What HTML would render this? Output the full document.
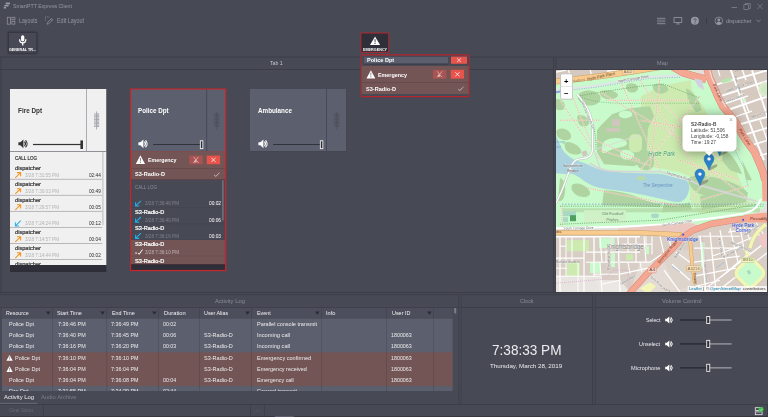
<!DOCTYPE html>
<html lang="en"><head><meta charset="utf-8"><title>SmartPTT Express Client</title>
<style>
html,body{margin:0;padding:0}
body{width:768px;height:417px;overflow:hidden;position:relative;background:#474955;font-family:"Liberation Sans",sans-serif}
.t{position:absolute;white-space:nowrap;transform-origin:0 0;display:block}
.r{position:absolute;display:block}
</style></head>
<body>
<header>
<svg class="r" style="left:3px;top:2px;" width="8" height="7"><g transform="translate(0.60 0.60) scale(0.5000 0.5000) translate(-0.00 -0.00)"><rect x="4" y="0" width="9" height="4" rx="1.5" fill="#9698a2"/><rect x="1" y="5" width="9" height="3" rx="1" fill="#9698a2"/><rect x="0" y="9" width="5" height="3" rx="1" fill="#9698a2"/></g></svg>
<span class="t" style="left:12.50px;top:3px;font-size:5.30px;line-height:6px;color:#9698a2;transform:scaleX(0.9884);">SmartPTT Express Client</span>
<svg class="r" style="left:6px;top:16px;" width="10" height="9"><g transform="translate(0.90 0.90) scale(0.4941 0.5067) translate(-0.00 -0.00)"><rect x=".7" y=".7" width="6.6" height="13.6" fill="none" stroke="#9698a2" stroke-width="1.4"/><rect x="10.2" y=".7" width="6" height="5" fill="none" stroke="#9698a2" stroke-width="1.4"/><rect x="10.2" y="8.6" width="6" height="5.7" fill="none" stroke="#9698a2" stroke-width="1.4"/></g></svg>
<span class="t" style="left:18.75px;top:17px;font-size:6.50px;line-height:7px;color:#9698a2;transform:scaleX(0.8082);">Layouts</span>
<svg class="r" style="left:45px;top:16px;" width="9" height="9"><g transform="translate(0.00 0.40) scale(0.4941 0.4941) translate(-0.00 -0.00)"><path d="M1 1h9M1 1v9" fill="none" stroke="#9698a2" stroke-width="1.3" stroke-dasharray="1.6 1.4"/><path d="M4.2 15.8l1-3.6 8-8 2.6 2.6-8 8z" fill="none" stroke="#9698a2" stroke-width="1.4" stroke-linejoin="round"/><path d="M11.6 5.8l2.6 2.6" stroke="#9698a2" stroke-width="1.2"/></g></svg>
<span class="t" style="left:56.90px;top:17px;font-size:6.50px;line-height:7px;color:#9698a2;transform:scaleX(0.8333);">Edit Layout</span>
<svg class="r" style="left:0px;top:24px;filter:drop-shadow(0 0.6px 1.2px rgba(0,0,0,.45));" width="46" height="38"><rect x="8.50" y="8.50" width="28.30" height="20.50" rx="0.00" fill="#474955" stroke="#33343e" stroke-width="0.60"/></svg>
<svg class="r" style="left:18px;top:35px;" width="9" height="11"><g transform="translate(0.90 0.20) scale(0.5067 0.4952) translate(-0.00 -0.00)"><rect x="4.300" y="0" width="6.400" height="12.500" rx="3.200" fill="#fff"/><path d="M1.300 8c0 9.800 12.400 9.800 12.400 0" fill="none" stroke="#fff" stroke-width="2.500"/><path d="M7.500 15v5.700" stroke="#fff" stroke-width="2.500"/></g></svg>
<span class="t" style="left:9.30px;top:47px;font-size:4.00px;line-height:5px;color:#fff;font-weight:bold;transform:scaleX(0.9227);">GENERAL TR...</span>
<svg class="r" style="left:731px;top:7px;" width="6" height="1"><rect x="0.60" y="0.20" width="5.40" height="0.70" fill="#8e909a"/></svg>
<svg class="r" style="left:743px;top:3px;" width="8" height="7"><g transform="translate(0.60 0.20) scale(0.5000 0.5077) translate(-0.00 -0.00)"><rect x=".6" y="3" width="9.4" height="9.4" fill="none" stroke="#8e909a" stroke-width="1.2"/><path d="M3.4 3V.6h10v10h-3" fill="none" stroke="#8e909a" stroke-width="1.2"/></g></svg>
<svg class="r" style="left:757px;top:3px;" width="6" height="7"><g transform="translate(0.00 0.40) scale(0.5000 0.5000) translate(-0.00 -0.00)"><path d="M.6 .6l10.8 10.8M11.4 .6L.6 11.4" stroke="#8e909a" stroke-width="1.2"/></g></svg>
<svg class="r" style="left:657px;top:17px;" width="9" height="8"><g transform="translate(0.00 0.80) scale(0.4941 0.4923) translate(-0.00 -0.00)"><path d="M0 1h17M0 6.5h17M0 12h17" stroke="#9698a2" stroke-width="1.7"/><path d="M0 3.7h17M0 9.2h17" stroke="#9698a2" stroke-width=".8" opacity=".6"/></g></svg>
<svg class="r" style="left:673px;top:17px;" width="10" height="8"><g transform="translate(0.60 0.20) scale(0.5059 0.5143) translate(-0.00 -0.00)"><rect x=".8" y=".8" width="15.4" height="9.6" fill="none" stroke="#9698a2" stroke-width="1.6"/><path d="M8.5 10.4v2.4M5 13.2h7" stroke="#9698a2" stroke-width="1.5"/></g></svg>
<svg class="r" style="left:690px;top:16px;" width="9" height="9"><g transform="translate(0.90 0.80) scale(0.5000 0.5000) translate(-0.00 -0.00)"><circle cx="8" cy="8" r="8" fill="#9698a2"/><path d="M5.6 6.3c0-3.4 5-3.2 4.9-.2 0 1.800-2.300 1.800-2.300 3.900" fill="none" stroke="#474955" stroke-width="1.7"/><circle cx="8.2" cy="12.400" r="1.100" fill="#474955"/></g></svg>
<svg class="r" style="left:706px;top:18px;" width="1" height="6"><rect x="0.40" y="0.00" width="0.60" height="5.60" fill="#33343e"/></svg>
<svg class="r" style="left:714px;top:16px;" width="9" height="10"><g transform="translate(0.60 0.70) scale(0.4941 0.4941) translate(-0.00 -0.00)"><circle cx="8.5" cy="8.5" r="7.7" fill="none" stroke="#9698a2" stroke-width="1.5"/><circle cx="8.500" cy="6.6" r="2.8" fill="#9698a2"/><path d="M3.300 13.800c.7-5 9.700-5 10.400 0a7.600 7.600 0 0 1-10.400 0z" fill="#9698a2"/></g></svg>
<span class="t" style="left:725.80px;top:18px;font-size:5.60px;line-height:6px;color:#9698a2;transform:scaleX(0.9908);">dispatcher</span>
<svg class="r" style="left:756px;top:19px;" width="5" height="4"><g transform="translate(0.00 0.20) scale(0.5000 0.5000) translate(-0.00 -0.00)"><path d="M.6 .6l4.400 4.800 4.400-4.800" fill="none" stroke="#9698a2" stroke-width="1.300"/></g></svg>
<svg class="r" style="left:0px;top:56px;" width="768" height="2"><rect x="0.00" y="0.60" width="768.00" height="0.90" fill="#3a3c46"/></svg>
<svg class="r" style="left:0px;top:69px;" width="554" height="1"><rect x="0.00" y="0.00" width="553.40" height="0.90" fill="#3a3c46"/></svg>
<svg class="r" style="left:556px;top:69px;" width="212" height="1"><rect x="0.00" y="0.00" width="212.00" height="0.90" fill="#3a3c46"/></svg>
<svg class="r" style="left:553px;top:57px;" width="2" height="237"><rect x="0.20" y="0.40" width="0.90" height="236.00" fill="#3a3c46"/></svg>
<svg class="r" style="left:555px;top:57px;" width="2" height="237"><rect x="0.60" y="0.40" width="0.90" height="236.00" fill="#3a3c46"/></svg>
<span class="t" style="left:270.35px;top:60px;font-size:5.20px;line-height:6px;color:#c6c7cd;transform:scaleX(0.9984);">Tab 1</span>
<span class="t" style="left:656.50px;top:60px;font-size:5.20px;line-height:6px;color:#8b8d97;transform:scaleX(1.0874);">Map</span>
<svg class="r" style="left:0px;top:57px;" width="2" height="237"><rect x="0.50" y="0.40" width="0.80" height="236.00" fill="#3a3c46"/></svg>
</header>
<main>
<section>
<svg class="r" style="left:2px;top:81px;filter:drop-shadow(0.300px 0.400px 0.700px rgba(0,0,0,.55));" width="113" height="79"><rect x="8.00" y="8.00" width="96.30" height="62.20" fill="#f0f0f0"/></svg>
<svg class="r" style="left:86px;top:89px;" width="1" height="63"><rect x="0.20" y="0.00" width="0.70" height="62.20" fill="#8f9095"/></svg>
<span class="t" style="left:18.10px;top:107px;font-size:6.40px;line-height:7px;color:#333;font-weight:bold;transform:scaleX(0.9968);">Fire Dpt</span>
<svg class="r" style="left:94px;top:111px;" width="6" height="19"><g transform="translate(0.00 0.40) scale(1.0000 1.0000) translate(-0.00 -0.00)"><rect x="0.20" y="2.00" width="1" height="1" fill="#9a9ca3"/><rect x="0.20" y="3.40" width="1" height="1" fill="#9a9ca3"/><rect x="0.20" y="4.80" width="1" height="1" fill="#9a9ca3"/><rect x="0.20" y="6.20" width="1" height="1" fill="#9a9ca3"/><rect x="0.20" y="7.60" width="1" height="1" fill="#9a9ca3"/><rect x="0.20" y="9.00" width="1" height="1" fill="#9a9ca3"/><rect x="0.20" y="10.40" width="1" height="1" fill="#9a9ca3"/><rect x="0.20" y="11.80" width="1" height="1" fill="#9a9ca3"/><rect x="0.20" y="13.20" width="1" height="1" fill="#9a9ca3"/><rect x="0.20" y="14.60" width="1" height="1" fill="#9a9ca3"/><rect x="1.50" y="2.00" width="1" height="1" fill="#9a9ca3"/><rect x="1.50" y="3.40" width="1" height="1" fill="#9a9ca3"/><rect x="1.50" y="4.80" width="1" height="1" fill="#9a9ca3"/><rect x="1.50" y="6.20" width="1" height="1" fill="#9a9ca3"/><rect x="1.50" y="7.60" width="1" height="1" fill="#9a9ca3"/><rect x="1.50" y="9.00" width="1" height="1" fill="#9a9ca3"/><rect x="1.50" y="10.40" width="1" height="1" fill="#9a9ca3"/><rect x="1.50" y="11.80" width="1" height="1" fill="#9a9ca3"/><rect x="1.50" y="13.20" width="1" height="1" fill="#9a9ca3"/><rect x="1.50" y="14.60" width="1" height="1" fill="#9a9ca3"/><rect x="2.80" y="2.00" width="1" height="1" fill="#9a9ca3"/><rect x="2.80" y="3.40" width="1" height="1" fill="#9a9ca3"/><rect x="2.80" y="4.80" width="1" height="1" fill="#9a9ca3"/><rect x="2.80" y="6.20" width="1" height="1" fill="#9a9ca3"/><rect x="2.80" y="7.60" width="1" height="1" fill="#9a9ca3"/><rect x="2.80" y="9.00" width="1" height="1" fill="#9a9ca3"/><rect x="2.80" y="10.40" width="1" height="1" fill="#9a9ca3"/><rect x="2.80" y="11.80" width="1" height="1" fill="#9a9ca3"/><rect x="2.80" y="13.20" width="1" height="1" fill="#9a9ca3"/><rect x="2.80" y="14.60" width="1" height="1" fill="#9a9ca3"/><rect x="4.10" y="2.00" width="1" height="1" fill="#9a9ca3"/><rect x="4.10" y="3.40" width="1" height="1" fill="#9a9ca3"/><rect x="4.10" y="4.80" width="1" height="1" fill="#9a9ca3"/><rect x="4.10" y="6.20" width="1" height="1" fill="#9a9ca3"/><rect x="4.10" y="7.60" width="1" height="1" fill="#9a9ca3"/><rect x="4.10" y="9.00" width="1" height="1" fill="#9a9ca3"/><rect x="4.10" y="10.40" width="1" height="1" fill="#9a9ca3"/><rect x="4.10" y="11.80" width="1" height="1" fill="#9a9ca3"/><rect x="4.10" y="13.20" width="1" height="1" fill="#9a9ca3"/><rect x="4.10" y="14.60" width="1" height="1" fill="#9a9ca3"/><rect x="2.250" y="0" width=".8" height="18" fill="#9a9ca3"/></g></svg>
<svg class="r" style="left:18px;top:139px;" width="11" height="10"><g transform="translate(0.40 0.20) scale(0.5000 0.5111) translate(-0.00 -0.00)"><path d="M0 6h4l6-5.5v17L4 12H0z" fill="#333"/><path d="M12.5 5.5a5 5 0 0 1 0 7M14.8 2.8a9 9 0 0 1 0 12.4" fill="none" stroke="#333" stroke-width="2.300" stroke-linecap="round"/></g></svg>
<svg class="r" style="left:33px;top:143px;" width="49" height="3"><rect x="0.00" y="0.90" width="49.00" height="1.20" fill="#333"/></svg>
<svg class="r" style="left:80px;top:140px;" width="3" height="9"><rect x="0.40" y="0.40" width="2.60" height="8.60" fill="#333"/></svg>
<svg class="r" style="left:10px;top:151px;" width="97" height="115"><rect x="0.00" y="0.60" width="96.30" height="113.60" fill="#f0f0f0"/></svg>
<svg class="r" style="left:10px;top:151px;" width="97" height="1"><rect x="0.00" y="0.00" width="96.30" height="0.80" fill="#8f9095"/></svg>
<span class="t" style="left:15.00px;top:155px;font-size:5.00px;line-height:6px;color:#222;transform:scaleX(0.9065);-webkit-text-stroke:0.150px #222;">CALL LOG</span>
<div class="r" style="left:10px;top:151px;width:96.3px;height:114px;overflow:hidden">
<span class="t" style="left:5.00px;top:14px;font-size:5.60px;line-height:6px;color:#383838;transform:scaleX(1.0063);-webkit-text-stroke:0.220px #383838;">dispatcher</span>
<svg class="r" style="left:4px;top:21px;" width="8" height="7"><g transform="translate(0.80 0.11) scale(0.4923 0.5000) translate(-0.00 -0.00)"><path d="M1 11.400L11.600 1.200M4.400 1h7.400v7.400" fill="none" stroke="#f7931e" stroke-width="2.100"/></g></svg>
<span class="t" style="left:15.00px;top:21px;font-size:5.00px;line-height:6px;color:#b3b3b3;transform:scaleX(0.9266);">3/28 7:31:55 PM</span>
<span class="t" style="left:79.45px;top:21px;font-size:5.00px;line-height:6px;color:#2a2a2a;transform:scaleX(0.9431);">02:44</span>
<svg class="r" style="left:0px;top:27px;" width="93" height="2"><rect x="0.00" y="0.85" width="92.30" height="0.80" fill="#a9aaad"/></svg>
<span class="t" style="left:5.00px;top:30px;font-size:5.60px;line-height:6px;color:#383838;transform:scaleX(1.0063);-webkit-text-stroke:0.220px #383838;">dispatcher</span>
<svg class="r" style="left:4px;top:37px;" width="8" height="7"><g transform="translate(0.80 0.15) scale(0.4923 0.5000) translate(-0.00 -0.00)"><path d="M1 11.400L11.600 1.200M4.400 1h7.400v7.400" fill="none" stroke="#f7931e" stroke-width="2.100"/></g></svg>
<span class="t" style="left:15.00px;top:37px;font-size:5.00px;line-height:6px;color:#b3b3b3;transform:scaleX(0.9266);">3/28 7:30:03 PM</span>
<span class="t" style="left:79.45px;top:37px;font-size:5.00px;line-height:6px;color:#2a2a2a;transform:scaleX(0.9431);">00:49</span>
<svg class="r" style="left:0px;top:43px;" width="93" height="2"><rect x="0.00" y="0.89" width="92.30" height="0.80" fill="#a9aaad"/></svg>
<span class="t" style="left:5.00px;top:46px;font-size:5.60px;line-height:6px;color:#383838;transform:scaleX(1.0063);-webkit-text-stroke:0.220px #383838;">dispatcher</span>
<svg class="r" style="left:4px;top:53px;" width="8" height="7"><g transform="translate(0.80 0.19) scale(0.4923 0.5000) translate(-0.00 -0.00)"><path d="M1 11.400L11.600 1.200M4.400 1h7.400v7.400" fill="none" stroke="#f7931e" stroke-width="2.100"/></g></svg>
<span class="t" style="left:15.00px;top:53px;font-size:5.00px;line-height:6px;color:#b3b3b3;transform:scaleX(0.9266);">3/28 7:29:57 PM</span>
<span class="t" style="left:79.45px;top:53px;font-size:5.00px;line-height:6px;color:#2a2a2a;transform:scaleX(0.9431);">00:05</span>
<svg class="r" style="left:0px;top:59px;" width="93" height="2"><rect x="0.00" y="0.93" width="92.30" height="0.80" fill="#a9aaad"/></svg>
<svg class="r" style="left:4px;top:69px;" width="8" height="7"><g transform="translate(0.80 0.23) scale(0.4923 0.5000) translate(-0.00 -0.00)"><path d="M12 1L1.400 11.200M8.600 11.400H1.200V4" fill="none" stroke="#22b0ee" stroke-width="2.100"/></g></svg>
<span class="t" style="left:15.00px;top:69px;font-size:5.00px;line-height:6px;color:#b3b3b3;transform:scaleX(0.9266);">3/28 7:24:24 PM</span>
<span class="t" style="left:79.45px;top:69px;font-size:5.00px;line-height:6px;color:#2a2a2a;transform:scaleX(0.9431);">00:12</span>
<svg class="r" style="left:0px;top:75px;" width="93" height="2"><rect x="0.00" y="0.97" width="92.30" height="0.80" fill="#a9aaad"/></svg>
<span class="t" style="left:5.00px;top:78px;font-size:5.60px;line-height:6px;color:#383838;transform:scaleX(1.0063);-webkit-text-stroke:0.220px #383838;">dispatcher</span>
<svg class="r" style="left:4px;top:85px;" width="8" height="7"><g transform="translate(0.80 0.27) scale(0.4923 0.5000) translate(-0.00 -0.00)"><path d="M1 11.400L11.600 1.200M4.400 1h7.400v7.400" fill="none" stroke="#f7931e" stroke-width="2.100"/></g></svg>
<span class="t" style="left:15.00px;top:85px;font-size:5.00px;line-height:6px;color:#b3b3b3;transform:scaleX(0.9266);">3/28 7:14:57 PM</span>
<span class="t" style="left:79.45px;top:85px;font-size:5.00px;line-height:6px;color:#2a2a2a;transform:scaleX(0.9431);">00:04</span>
<svg class="r" style="left:0px;top:92px;" width="93" height="1"><rect x="0.00" y="0.01" width="92.30" height="0.80" fill="#a9aaad"/></svg>
<span class="t" style="left:5.00px;top:94px;font-size:5.60px;line-height:6px;color:#383838;transform:scaleX(1.0063);-webkit-text-stroke:0.220px #383838;">dispatcher</span>
<svg class="r" style="left:4px;top:101px;" width="8" height="7"><g transform="translate(0.80 0.31) scale(0.4923 0.5000) translate(-0.00 -0.00)"><path d="M1 11.400L11.600 1.200M4.400 1h7.400v7.400" fill="none" stroke="#f7931e" stroke-width="2.100"/></g></svg>
<span class="t" style="left:15.00px;top:101px;font-size:5.00px;line-height:6px;color:#b3b3b3;transform:scaleX(0.9266);">3/28 7:14:44 PM</span>
<span class="t" style="left:79.45px;top:101px;font-size:5.00px;line-height:6px;color:#2a2a2a;transform:scaleX(0.9431);">00:02</span>
<svg class="r" style="left:0px;top:108px;" width="93" height="1"><rect x="0.00" y="0.05" width="92.30" height="0.80" fill="#a9aaad"/></svg>
<span class="t" style="left:5.00px;top:110px;font-size:5.60px;line-height:6px;color:#383838;transform:scaleX(1.0063);-webkit-text-stroke:0.220px #383838;">dispatcher</span>
<svg class="r" style="left:0px;top:124px;" width="93" height="1"><rect x="0.00" y="0.09" width="92.30" height="0.80" fill="#a9aaad"/></svg>
</div>
<svg class="r" style="left:102px;top:152px;" width="2" height="73"><rect x="0.30" y="0.00" width="1.20" height="73.00" fill="#c4c4c6"/></svg>
<svg class="r" style="left:10px;top:265px;" width="97" height="7"><rect x="0.00" y="0.00" width="96.30" height="7.00" fill="#2d2e37"/></svg>
<svg class="r" style="left:129px;top:88px;" width="98" height="184"><rect x="0.90" y="0.40" width="96.50" height="182.80" fill="#c1272d"/></svg>
<svg class="r" style="left:131px;top:89px;" width="94" height="63"><rect x="0.20" y="0.60" width="93.80" height="61.60" fill="#5c5f6d"/></svg>
<svg class="r" style="left:206px;top:89px;" width="2" height="63"><rect x="0.40" y="0.20" width="0.70" height="62.00" fill="#3f414c"/></svg>
<span class="t" style="left:138.10px;top:107px;font-size:6.40px;line-height:7px;color:#fff;font-weight:bold;transform:scaleX(0.9778);">Police Dpt</span>
<svg class="r" style="left:214px;top:111px;" width="6" height="19"><g transform="translate(0.00 0.40) scale(1.0000 1.0000) translate(-0.00 -0.00)"><rect x="0.20" y="2.00" width="1" height="1" fill="#4e505d"/><rect x="0.20" y="3.40" width="1" height="1" fill="#4e505d"/><rect x="0.20" y="4.80" width="1" height="1" fill="#4e505d"/><rect x="0.20" y="6.20" width="1" height="1" fill="#4e505d"/><rect x="0.20" y="7.60" width="1" height="1" fill="#4e505d"/><rect x="0.20" y="9.00" width="1" height="1" fill="#4e505d"/><rect x="0.20" y="10.40" width="1" height="1" fill="#4e505d"/><rect x="0.20" y="11.80" width="1" height="1" fill="#4e505d"/><rect x="0.20" y="13.20" width="1" height="1" fill="#4e505d"/><rect x="0.20" y="14.60" width="1" height="1" fill="#4e505d"/><rect x="1.50" y="2.00" width="1" height="1" fill="#4e505d"/><rect x="1.50" y="3.40" width="1" height="1" fill="#4e505d"/><rect x="1.50" y="4.80" width="1" height="1" fill="#4e505d"/><rect x="1.50" y="6.20" width="1" height="1" fill="#4e505d"/><rect x="1.50" y="7.60" width="1" height="1" fill="#4e505d"/><rect x="1.50" y="9.00" width="1" height="1" fill="#4e505d"/><rect x="1.50" y="10.40" width="1" height="1" fill="#4e505d"/><rect x="1.50" y="11.80" width="1" height="1" fill="#4e505d"/><rect x="1.50" y="13.20" width="1" height="1" fill="#4e505d"/><rect x="1.50" y="14.60" width="1" height="1" fill="#4e505d"/><rect x="2.80" y="2.00" width="1" height="1" fill="#4e505d"/><rect x="2.80" y="3.40" width="1" height="1" fill="#4e505d"/><rect x="2.80" y="4.80" width="1" height="1" fill="#4e505d"/><rect x="2.80" y="6.20" width="1" height="1" fill="#4e505d"/><rect x="2.80" y="7.60" width="1" height="1" fill="#4e505d"/><rect x="2.80" y="9.00" width="1" height="1" fill="#4e505d"/><rect x="2.80" y="10.40" width="1" height="1" fill="#4e505d"/><rect x="2.80" y="11.80" width="1" height="1" fill="#4e505d"/><rect x="2.80" y="13.20" width="1" height="1" fill="#4e505d"/><rect x="2.80" y="14.60" width="1" height="1" fill="#4e505d"/><rect x="4.10" y="2.00" width="1" height="1" fill="#4e505d"/><rect x="4.10" y="3.40" width="1" height="1" fill="#4e505d"/><rect x="4.10" y="4.80" width="1" height="1" fill="#4e505d"/><rect x="4.10" y="6.20" width="1" height="1" fill="#4e505d"/><rect x="4.10" y="7.60" width="1" height="1" fill="#4e505d"/><rect x="4.10" y="9.00" width="1" height="1" fill="#4e505d"/><rect x="4.10" y="10.40" width="1" height="1" fill="#4e505d"/><rect x="4.10" y="11.80" width="1" height="1" fill="#4e505d"/><rect x="4.10" y="13.20" width="1" height="1" fill="#4e505d"/><rect x="4.10" y="14.60" width="1" height="1" fill="#4e505d"/><rect x="2.250" y="0" width=".8" height="18" fill="#4e505d"/></g></svg>
<svg class="r" style="left:138px;top:139px;" width="11" height="10"><g transform="translate(0.40 0.20) scale(0.5000 0.5111) translate(-0.00 -0.00)"><path d="M0 6h4l6-5.5v17L4 12H0z" fill="#fff"/><path d="M12.5 5.5a5 5 0 0 1 0 7M14.8 2.8a9 9 0 0 1 0 12.4" fill="none" stroke="#fff" stroke-width="2.300" stroke-linecap="round"/></g></svg>
<svg class="r" style="left:153px;top:144px;" width="48" height="1"><rect x="0.00" y="0.00" width="48.00" height="0.90" fill="#2d2e37"/></svg>
<svg class="r" style="left:199px;top:140px;" width="5" height="10"><rect x="1.35" y="0.75" width="2.50" height="7.90" rx="0.00" fill="#2d2e37" stroke="#f0f0f2" stroke-width="0.90"/></svg>
<svg class="r" style="left:131px;top:151px;" width="94" height="29"><rect x="0.20" y="0.20" width="93.80" height="28.10" fill="#735555"/></svg>
<svg class="r" style="left:131px;top:168px;" width="94" height="1"><rect x="0.20" y="0.30" width="93.80" height="0.60" fill="#5e4547"/></svg>
<svg class="r" style="left:135px;top:155px;" width="11" height="10"><g transform="translate(0.60 0.00) scale(0.4800 0.5111) translate(-0.00 -0.00)"><path d="M10 .6L19.6 17.4H.4z" fill="#fff"/><path d="M9 6h2l-.3 6.2H9.3z" fill="rgba(0,0,0,.55)"/><rect x="9" y="13.3" width="2" height="2" fill="rgba(0,0,0,.55)"/></g></svg>
<span class="t" style="left:147.80px;top:157px;font-size:5.60px;line-height:6px;color:#fff;font-weight:bold;transform:scaleX(0.9439);">Emergency</span>
<svg class="r" style="left:189px;top:155px;" width="14" height="10"><rect x="0.20" y="0.60" width="13.60" height="8.60" fill="#a95353"/></svg>
<svg class="r" style="left:192px;top:156px;" width="8" height="8"><g transform="translate(0.80 0.40) scale(0.4923 0.5000) translate(-0.00 -0.00)"><path d="M1.500 1l10 12M11.500 1L1.500 13" stroke="#ddb9b9" stroke-width="1.700"/><circle cx="5" cy="10" r="2.400" fill="#ddb9b9"/></g></svg>
<svg class="r" style="left:206px;top:155px;" width="15" height="10"><rect x="0.70" y="0.60" width="13.40" height="8.60" fill="#e8534b"/></svg>
<svg class="r" style="left:210px;top:157px;" width="6" height="6"><g transform="translate(0.90 0.40) scale(0.5000 0.5000) translate(-0.00 -0.00)"><path d="M.7 .7l8.600 8.600M9.300 .7L.7 9.300" stroke="#fff" stroke-width="1.500"/></g></svg>
<span class="t" style="left:135.00px;top:171px;font-size:5.60px;line-height:6px;color:#fff;font-weight:bold;transform:scaleX(0.9940);">S3-Radio-D</span>
<svg class="r" style="left:213px;top:172px;" width="7" height="5"><g transform="translate(0.70 0.40) scale(0.5000 0.5000) translate(-0.00 -0.00)"><path d="M.8 5l3.400 3L11.600 .8" fill="none" stroke="#e6dcdc" stroke-width="1.500"/></g></svg>
<svg class="r" style="left:131px;top:179px;" width="94" height="86"><rect x="0.20" y="0.30" width="93.80" height="85.00" fill="#474955"/></svg>
<span class="t" style="left:135.00px;top:184px;font-size:5.00px;line-height:6px;color:#8b8d97;transform:scaleX(0.9065);">CALL LOG</span>
<div class="r" style="left:131.2px;top:179px;width:93.800px;height:85.200px;overflow:hidden">
<svg class="r" style="left:4px;top:21px;" width="7" height="7"><g transform="translate(0.00 0.35) scale(0.4923 0.5000) translate(-0.00 -0.00)"><path d="M12 1L1.400 11.200M8.600 11.400H1.200V4" fill="none" stroke="#22b0ee" stroke-width="2.100"/></g></svg>
<span class="t" style="left:13.70px;top:21px;font-size:5.00px;line-height:6px;color:#7f818c;transform:scaleX(0.9266);">3/28 7:36:46 PM</span>
<span class="t" style="left:78.10px;top:21px;font-size:5.00px;line-height:6px;color:#fff;transform:scaleX(0.9590);">00:02</span>
<svg class="r" style="left:0px;top:28px;" width="94" height="1"><rect x="0.00" y="0.40" width="93.80" height="0.60" fill="#41434e"/></svg>
<span class="t" style="left:3.80px;top:30px;font-size:5.60px;line-height:6px;color:#fff;transform:scaleX(1.0049);-webkit-text-stroke:0.220px #fff;">S3-Radio-D</span>
<svg class="r" style="left:4px;top:37px;" width="7" height="7"><g transform="translate(0.00 0.50) scale(0.4923 0.5000) translate(-0.00 -0.00)"><path d="M12 1L1.400 11.200M8.600 11.400H1.200V4" fill="none" stroke="#22b0ee" stroke-width="2.100"/></g></svg>
<span class="t" style="left:13.70px;top:38px;font-size:5.00px;line-height:6px;color:#7f818c;transform:scaleX(0.9266);">3/28 7:36:40 PM</span>
<span class="t" style="left:78.10px;top:38px;font-size:5.00px;line-height:6px;color:#fff;transform:scaleX(0.9590);">00:06</span>
<svg class="r" style="left:0px;top:44px;" width="94" height="2"><rect x="0.00" y="0.55" width="93.80" height="0.60" fill="#41434e"/></svg>
<span class="t" style="left:3.80px;top:46px;font-size:5.60px;line-height:6px;color:#fff;transform:scaleX(1.0049);-webkit-text-stroke:0.220px #fff;">S3-Radio-D</span>
<svg class="r" style="left:4px;top:53px;" width="7" height="7"><g transform="translate(0.00 0.65) scale(0.4923 0.5000) translate(-0.00 -0.00)"><path d="M12 1L1.400 11.200M8.600 11.400H1.200V4" fill="none" stroke="#22b0ee" stroke-width="2.100"/></g></svg>
<span class="t" style="left:13.70px;top:54px;font-size:5.00px;line-height:6px;color:#7f818c;transform:scaleX(0.9266);">3/28 7:36:16 PM</span>
<span class="t" style="left:78.10px;top:54px;font-size:5.00px;line-height:6px;color:#fff;transform:scaleX(0.9590);">00:03</span>
<svg class="r" style="left:0px;top:60px;" width="94" height="2"><rect x="0.00" y="0.70" width="93.80" height="0.60" fill="#41434e"/></svg>
<svg class="r" style="left:0px;top:60px;" width="94" height="18"><rect x="0.00" y="1.00" width="93.80" height="16.15" fill="#735555"/></svg>
<span class="t" style="left:3.80px;top:62px;font-size:5.60px;line-height:6px;color:#fff;transform:scaleX(1.0049);-webkit-text-stroke:0.220px #fff;">S3-Radio-D</span>
<svg class="r" style="left:4px;top:69px;" width="9" height="7"><g transform="translate(0.20 0.80) scale(0.5000 0.5000) translate(-0.00 -0.00)"><path d="M0 8.500h3.500M5.500 8.500l2.500 2.500L14.500 1.500" fill="none" stroke="#fff" stroke-width="2"/></g></svg>
<span class="t" style="left:13.70px;top:70px;font-size:5.00px;line-height:6px;color:#c2b2b2;transform:scaleX(0.9266);">3/28 7:36:10 PM</span>
<svg class="r" style="left:0px;top:76px;" width="94" height="2"><rect x="0.00" y="0.85" width="93.80" height="0.60" fill="#604749"/></svg>
<svg class="r" style="left:0px;top:77px;" width="94" height="17"><rect x="0.00" y="0.15" width="93.80" height="16.15" fill="#735555"/></svg>
<span class="t" style="left:3.80px;top:79px;font-size:5.60px;line-height:6px;color:#fff;transform:scaleX(1.0049);-webkit-text-stroke:0.220px #fff;">S3-Radio-D</span>
<svg class="r" style="left:0px;top:92px;" width="94" height="2"><rect x="0.00" y="1.00" width="93.80" height="0.60" fill="#604749"/></svg>
</div>
<svg class="r" style="left:222px;top:180px;" width="2" height="41"><rect x="0.30" y="0.30" width="1.20" height="40.20" fill="#7c7e8a"/></svg>
<svg class="r" style="left:131px;top:264px;" width="94" height="6"><rect x="0.20" y="0.20" width="93.80" height="5.70" fill="#2d2e37"/></svg>
<svg class="r" style="left:242px;top:81px;filter:drop-shadow(0.300px 0.400px 0.700px rgba(0,0,0,.55));" width="113" height="79"><rect x="8.00" y="8.00" width="96.30" height="62.20" fill="#5c5f6d"/></svg>
<svg class="r" style="left:326px;top:89px;" width="1" height="63"><rect x="0.20" y="0.00" width="0.70" height="62.20" fill="#3f414c"/></svg>
<span class="t" style="left:258.10px;top:107px;font-size:6.40px;line-height:7px;color:#fff;font-weight:bold;transform:scaleX(0.9856);">Ambulance</span>
<svg class="r" style="left:334px;top:111px;" width="6" height="19"><g transform="translate(0.00 0.40) scale(1.0000 1.0000) translate(-0.00 -0.00)"><rect x="0.20" y="2.00" width="1" height="1" fill="#4e505d"/><rect x="0.20" y="3.40" width="1" height="1" fill="#4e505d"/><rect x="0.20" y="4.80" width="1" height="1" fill="#4e505d"/><rect x="0.20" y="6.20" width="1" height="1" fill="#4e505d"/><rect x="0.20" y="7.60" width="1" height="1" fill="#4e505d"/><rect x="0.20" y="9.00" width="1" height="1" fill="#4e505d"/><rect x="0.20" y="10.40" width="1" height="1" fill="#4e505d"/><rect x="0.20" y="11.80" width="1" height="1" fill="#4e505d"/><rect x="0.20" y="13.20" width="1" height="1" fill="#4e505d"/><rect x="0.20" y="14.60" width="1" height="1" fill="#4e505d"/><rect x="1.50" y="2.00" width="1" height="1" fill="#4e505d"/><rect x="1.50" y="3.40" width="1" height="1" fill="#4e505d"/><rect x="1.50" y="4.80" width="1" height="1" fill="#4e505d"/><rect x="1.50" y="6.20" width="1" height="1" fill="#4e505d"/><rect x="1.50" y="7.60" width="1" height="1" fill="#4e505d"/><rect x="1.50" y="9.00" width="1" height="1" fill="#4e505d"/><rect x="1.50" y="10.40" width="1" height="1" fill="#4e505d"/><rect x="1.50" y="11.80" width="1" height="1" fill="#4e505d"/><rect x="1.50" y="13.20" width="1" height="1" fill="#4e505d"/><rect x="1.50" y="14.60" width="1" height="1" fill="#4e505d"/><rect x="2.80" y="2.00" width="1" height="1" fill="#4e505d"/><rect x="2.80" y="3.40" width="1" height="1" fill="#4e505d"/><rect x="2.80" y="4.80" width="1" height="1" fill="#4e505d"/><rect x="2.80" y="6.20" width="1" height="1" fill="#4e505d"/><rect x="2.80" y="7.60" width="1" height="1" fill="#4e505d"/><rect x="2.80" y="9.00" width="1" height="1" fill="#4e505d"/><rect x="2.80" y="10.40" width="1" height="1" fill="#4e505d"/><rect x="2.80" y="11.80" width="1" height="1" fill="#4e505d"/><rect x="2.80" y="13.20" width="1" height="1" fill="#4e505d"/><rect x="2.80" y="14.60" width="1" height="1" fill="#4e505d"/><rect x="4.10" y="2.00" width="1" height="1" fill="#4e505d"/><rect x="4.10" y="3.40" width="1" height="1" fill="#4e505d"/><rect x="4.10" y="4.80" width="1" height="1" fill="#4e505d"/><rect x="4.10" y="6.20" width="1" height="1" fill="#4e505d"/><rect x="4.10" y="7.60" width="1" height="1" fill="#4e505d"/><rect x="4.10" y="9.00" width="1" height="1" fill="#4e505d"/><rect x="4.10" y="10.40" width="1" height="1" fill="#4e505d"/><rect x="4.10" y="11.80" width="1" height="1" fill="#4e505d"/><rect x="4.10" y="13.20" width="1" height="1" fill="#4e505d"/><rect x="4.10" y="14.60" width="1" height="1" fill="#4e505d"/><rect x="2.250" y="0" width=".8" height="18" fill="#4e505d"/></g></svg>
<svg class="r" style="left:258px;top:139px;" width="11" height="10"><g transform="translate(0.40 0.20) scale(0.5000 0.5111) translate(-0.00 -0.00)"><path d="M0 6h4l6-5.5v17L4 12H0z" fill="#fff"/><path d="M12.5 5.5a5 5 0 0 1 0 7M14.8 2.8a9 9 0 0 1 0 12.4" fill="none" stroke="#fff" stroke-width="2.300" stroke-linecap="round"/></g></svg>
<svg class="r" style="left:273px;top:144px;" width="48" height="1"><rect x="0.00" y="0.00" width="48.00" height="0.90" fill="#2d2e37"/></svg>
<svg class="r" style="left:319px;top:140px;" width="5" height="10"><rect x="1.35" y="0.75" width="2.50" height="7.90" rx="0.00" fill="#2d2e37" stroke="#f0f0f2" stroke-width="0.90"/></svg>
</section>
<section>
<svg class="r" style="left:556px;top:69.800px" width="211" height="222.200" viewBox="556 69.800 211 222.200" font-family="Liberation Sans, sans-serif"><rect x="556" y="69" width="212" height="224" fill="#e4dfda"/><path d="M556 84L600 78L640 72L656 69.500H692L709 80L718 97L729 114L743 135L754 152L763 172L766 200L764 208L756 212L744 216L721 220.500L700 225L692 222L663 226L556 229z" fill="#c8facc"/><path d="M641 96L660 86L690 80L706 92L724 122L744 150L756 178L700 180L680 172L660 168L646 166L641 150z" fill="#cdebb0"/><path d="M690 176L756 178L762 196L752 206L700 214L690 200z" fill="#cdebb0" opacity=".8"/><path d="M690 72L709 80L718 97L729 114L743 135L754 152L763 172L766 198L750 202L740 180L728 152L714 126L702 104L692 90z" fill="#c8facc"/><path d="M735 150L744 168L748 186" stroke="#7a8fd8" stroke-width=".6" stroke-dasharray="1 1.400" fill="none"/><path d="M581 92c6-3 14-2 18 2s0 10-6 11-12-1-14-5 0-7 2-8z" fill="#b0d4a1"/><path d="M600 91c6-2 14-1 17 2s-2 6-8 6-10-4-9-8z" fill="#b0d4a1"/><path d="M627 84c4-2 10-1 11 3s-4 6-8 5-5-6-3-8z" fill="#b0d4a1"/><path d="M600 126L612 114L630 108L650 106L654 116L648 128L646 160L634 166L604 164L597 152L597 130z" fill="#b0d4a1"/><path d="M556 99c4-1 9 3 9 7s-5 5-9 3z" fill="#b0d4a1"/><path d="M578 115c4-1 10 2 11 6s-3 6-7 5-6-9-4-11z" fill="#b0d4a1"/><path d="M558 129c5-2 12 1 13 6s-5 6-10 4-6-8-3-10z" fill="#b0d4a1"/><path d="M566 142c5-1 13 3 15 8s-6 5-11 3-7-9-4-11z" fill="#b0d4a1"/><path d="M640 150c8-2 14 4 14 12s-8 10-14 6-4-16 0-18z" fill="#b0d4a1"/><path d="M654 84c6-2 12 0 14 4s-6 6-10 5-7-7-4-9z" fill="#b0d4a1"/><path d="M692 176c10-2 34 2 48 10s6 14-8 14-34-4-40-12-4-11 0-12z" fill="#b0d4a1"/><path d="M724 150c6 2 14 12 18 24l-12-4-8-10z" fill="#b0d4a1"/><path d="M742 160l10 20-6 0z" fill="#b0d4a1"/><path d="M573 184c4-2 12 0 16 6s-4 8-10 6-10-9-6-12z" fill="#b0d4a1"/><path d="M560 178c3 0 6 6 5 14s-4 10-7 8z" fill="#b0d4a1"/><path d="M604 190c10 0 24 3 34 7s16 6 24 6l-2 4-58-2z" fill="#b0d4a1"/><path d="M664 202c6 2 20 2 26 0l2 8-30 2z" fill="#b0d4a1"/><path d="M686 88c6 2 12 10 16 22l-6 2-8-12z" fill="#b0d4a1"/><path d="M700 196c8-2 30-6 48-4l-2 10-44 8z" fill="#b0d4a1"/><path d="M606 140c6-3 16-3 20 1s-4 6-10 7-14 8-14 3 0-9 4-11z" fill="#c8facc"/><path d="M622 150c4-1 10 0 12 4s-6 6-10 5-5-8-2-9z" fill="#c8facc"/><path d="M620 112c4-2 10-2 12 1s-4 5-8 5-7-4-4-6z" fill="#c8facc"/><rect x="629" y="134" width="13" height="18" rx="5" fill="#cdebb0"/><path d="M562 208H760V212H562z" fill="#b0d4a1" opacity=".7"/><rect x="584" y="210" width="42" height="13" fill="#d0f0c8"/><rect x="612" y="119" width="8" height="7" fill="#cfc6bd"/><rect x="606" y="128" width="14" height="3.500" fill="#cfc6bd"/><rect x="582" y="151" width="5" height="5" fill="#cfc6bd" transform="rotate(-20 584 153)"/><rect x="563" y="211" width="13" height="5" fill="#a7d9c4"/><rect x="563" y="217" width="5" height="5" fill="#a7d9c4"/><rect x="570" y="215" width="6" height="6" fill="#4fa060"/><ellipse cx="655" cy="215.500" rx="4" ry="2.300" fill="#a7d9c4"/><path d="M556 135.500L561.600 148C564 152 567 155 571 157.600S578 161 582.700 162.400S590 166 596 168S606 170.500 612 171S620 172.300 625 172.500L660 173.500C668 175 676 177.500 686 180C689 182 690 186 689 190S687 197 684 199.500S679 202 675.300 201.600S668 200 662 198.750S648 195.500 638.400 193.700S620 191 609.600 189.400S596 187 590.300 184.400S580 177 575 174.800S570 174 567.300 174S560 173 556 173z" fill="#aad3df"/><ellipse cx="641" cy="178" rx="4.500" ry="2" fill="#b8dba8"/><path d="M600 92L700 150" stroke="#fff" stroke-width="1.500" fill="none" opacity=".45"/><path d="M600 92L700 150" stroke="#ee9f90" stroke-width=".9" stroke-dasharray="1 .8" fill="none"/><path d="M640 80L700 175" stroke="#fff" stroke-width="1.500" fill="none" opacity=".45"/><path d="M640 80L700 175" stroke="#ee9f90" stroke-width=".9" stroke-dasharray="1 .8" fill="none"/><path d="M606 100L690 100" stroke="#fff" stroke-width="1.500" fill="none" opacity=".45"/><path d="M606 100L690 100" stroke="#ee9f90" stroke-width=".9" stroke-dasharray="1 .8" fill="none"/><path d="M620 80L660 170" stroke="#fff" stroke-width="1.500" fill="none" opacity=".45"/><path d="M620 80L660 170" stroke="#ee9f90" stroke-width=".9" stroke-dasharray="1 .8" fill="none"/><path d="M660 78L650 170" stroke="#fff" stroke-width="1.500" fill="none" opacity=".45"/><path d="M660 78L650 170" stroke="#ee9f90" stroke-width=".9" stroke-dasharray="1 .8" fill="none"/><path d="M700 96L640 170" stroke="#fff" stroke-width="1.500" fill="none" opacity=".45"/><path d="M700 96L640 170" stroke="#ee9f90" stroke-width=".9" stroke-dasharray="1 .8" fill="none"/><path d="M690 120L740 150" stroke="#fff" stroke-width="1.500" fill="none" opacity=".45"/><path d="M690 120L740 150" stroke="#ee9f90" stroke-width=".9" stroke-dasharray="1 .8" fill="none"/><path d="M680 160L740 180" stroke="#fff" stroke-width="1.500" fill="none" opacity=".45"/><path d="M680 160L740 180" stroke="#ee9f90" stroke-width=".9" stroke-dasharray="1 .8" fill="none"/><path d="M710 170L750 200" stroke="#fff" stroke-width="1.500" fill="none" opacity=".45"/><path d="M710 170L750 200" stroke="#ee9f90" stroke-width=".9" stroke-dasharray="1 .8" fill="none"/><path d="M560 100L600 160" stroke="#fff" stroke-width="1.500" fill="none" opacity=".45"/><path d="M560 100L600 160" stroke="#ee9f90" stroke-width=".9" stroke-dasharray="1 .8" fill="none"/><path d="M570 90L590 140" stroke="#fff" stroke-width="1.500" fill="none" opacity=".45"/><path d="M570 90L590 140" stroke="#ee9f90" stroke-width=".9" stroke-dasharray="1 .8" fill="none"/><path d="M560 120L600 120" stroke="#fff" stroke-width="1.500" fill="none" opacity=".45"/><path d="M560 120L600 120" stroke="#ee9f90" stroke-width=".9" stroke-dasharray="1 .8" fill="none"/><path d="M596 140L640 160" stroke="#fff" stroke-width="1.500" fill="none" opacity=".45"/><path d="M596 140L640 160" stroke="#ee9f90" stroke-width=".9" stroke-dasharray="1 .8" fill="none"/><path d="M600 150L650 165" stroke="#fff" stroke-width="1.500" fill="none" opacity=".45"/><path d="M600 150L650 165" stroke="#ee9f90" stroke-width=".9" stroke-dasharray="1 .8" fill="none"/><path d="M640 120L700 130" stroke="#fff" stroke-width="1.500" fill="none" opacity=".45"/><path d="M640 120L700 130" stroke="#ee9f90" stroke-width=".9" stroke-dasharray="1 .8" fill="none"/><path d="M660 100L720 160" stroke="#fff" stroke-width="1.500" fill="none" opacity=".45"/><path d="M660 100L720 160" stroke="#ee9f90" stroke-width=".9" stroke-dasharray="1 .8" fill="none"/><path d="M712 172L690 200" stroke="#fff" stroke-width="1.500" fill="none" opacity=".45"/><path d="M712 172L690 200" stroke="#ee9f90" stroke-width=".9" stroke-dasharray="1 .8" fill="none"/><path d="M700 200L750 185" stroke="#fff" stroke-width="1.500" fill="none" opacity=".45"/><path d="M700 200L750 185" stroke="#ee9f90" stroke-width=".9" stroke-dasharray="1 .8" fill="none"/><path d="M588 188L680 206" stroke="#fff" stroke-width="1.500" fill="none" opacity=".45"/><path d="M588 188L680 206" stroke="#ee9f90" stroke-width=".9" stroke-dasharray="1 .8" fill="none"/><path d="M562 232V205" stroke="#fff" stroke-width="1.500" fill="none" opacity=".45"/><path d="M562 232V205" stroke="#ee9f90" stroke-width=".9" stroke-dasharray="1 .8" fill="none"/><path d="M578 96L600 92L640 86L664 84L700 98" stroke="#5aa05a" stroke-width=".8" stroke-dasharray="1 1.200" fill="none"/><path d="M578 96C590 100 600 104 640 103H700" stroke="#5aa05a" stroke-width=".8" stroke-dasharray="1 1.200" fill="none" opacity=".7"/><path d="M560 206H764M560 224L660 220L760 204" stroke="#5aa05a" stroke-width=".8" stroke-dasharray="1 1.200" fill="none"/><path d="M578 98C592 110 596 130 596 150" stroke="#5aa05a" stroke-width=".8" stroke-dasharray="1 1.200" fill="none"/><path d="M562 204H764" stroke="#6a7fd0" stroke-width=".6" stroke-dasharray="1.500 1.500" fill="none"/><path d="M556 90L596 85.500L648 76.800L680 75.400L690 76" stroke="#dfe6e6" stroke-width="2.400" fill="none"/><path d="M560 91L596 87L648 78.300L680 77" stroke="#7a8fd8" stroke-width=".6" stroke-dasharray="1 1.400" fill="none"/><path d="M577 94C588 106 592.500 116 592.500 128V146C592.500 152 592 155 588 157S580 158 576 160S570 168 568 174L562 190L556 203" stroke="#bcc2c2" stroke-width="2.300" fill="none"/><path d="M577 94C588 106 592.500 116 592.500 128V146C592.500 152 592 155 588 157S580 158 576 160S570 168 568 174L562 190L556 203" stroke="#fff" stroke-width="1.300" fill="none"/><path d="M590 163C600 170 606 171 625 171.500H660L690 180L700 185L756 201" stroke="#d6d6d6" stroke-width="1.800" fill="none"/><path d="M594 150L600 168" stroke="#d6d6d6" stroke-width="1.200" fill="none"/><path d="M596 149L640 135" stroke="#d9dcd6" stroke-width="1" fill="none"/><path d="M556 228L620 226.500L663 224.300L692.500 220.400L721.400 216.800L744.400 213.200L752 210.300L756 207.400L759 203L761 198.500" stroke="#fff" stroke-width="2" fill="none"/><path d="M618 228.500L690 222.500L700 226L682 232H618z" fill="#ecc9c0"/><path d="M708 69H768V186L763 172L754 151L742 135L729 113L718 96L712 82z" fill="#d6c9bf"/><path d="M716 84.500L768 70" stroke="#fff" fill="none" stroke-width="1.9"/><path d="M721.500 95.700L768 80.600" stroke="#fff" fill="none" stroke-width="1.9"/><path d="M723 104L748 95.700" stroke="#fff" fill="none" stroke-width="1.5"/><path d="M725.700 110.500L768 96" stroke="#fff" fill="none" stroke-width="2.0"/><path d="M731 118L752 111" stroke="#fff" fill="none" stroke-width="1.4"/><path d="M736.600 125L768 116.500" stroke="#fff" fill="none" stroke-width="1.9"/><path d="M741 135.500L768 127.500" stroke="#fff" fill="none" stroke-width="1.7"/><path d="M748 146L768 140" stroke="#fff" fill="none" stroke-width="1.5"/><path d="M754 157L768 153" stroke="#fff" fill="none" stroke-width="1.4"/><path d="M729.500 66L746.700 115L756 140L764 160" stroke="#fff" fill="none" stroke-width="1.9"/><path d="M752 70L768 118" stroke="#fff" fill="none" stroke-width="1.9"/><path d="M741.600 93L749 112" stroke="#fff" fill="none" stroke-width="1.4"/><path d="M760 120L768 142" stroke="#fff" fill="none" stroke-width="1.4"/><path d="M741 66L746 80" stroke="#fff" fill="none" stroke-width="1.4"/><path d="M718 69L720 76" stroke="#fff" fill="none" stroke-width="1.2"/><rect x="721.500" y="78.500" width="10" height="3.600" fill="#b9e6b0" transform="rotate(-16 726 80)"/><rect x="742" y="99" width="4" height="2.500" fill="#c8facc" transform="rotate(-18 744 100)"/><circle cx="766" cy="89" r="7.500" fill="#dcebd0"/><circle cx="766" cy="89" r="5" fill="#cfeac0"/><path d="M556 69H660L600 77L556 84z" fill="#d6c9bf"/><rect x="607" y="69" width="12.400" height="3.400" fill="#f4f2ee"/><path d="M568 69L572 80M590 69L592 77M556 72L566 70" stroke="#fff" fill="none" stroke-width="1.200"/><path d="M556 234H682L700 226L768 214V293H556z" fill="#d9cec5"/><rect x="567" y="240" width="22" height="11" fill="#cdebb0"/><rect x="599" y="238" width="11" height="10" fill="#c8facc"/><rect x="612" y="237" width="2.5" height="8" fill="#c8facc"/><rect x="567" y="262" width="13" height="14" fill="#cdebb0"/><rect x="590" y="262" width="10" height="11" fill="#c8facc"/><rect x="611" y="253" width="4" height="14" fill="#c8facc"/><rect x="626" y="254" width="7" height="6" fill="#cdebb0"/><rect x="646" y="246" width="3" height="8" fill="#c8facc"/><rect x="587" y="279" width="11" height="8" fill="#9fd3a6"/><rect x="604" y="283" width="6" height="9" fill="#c8facc"/><rect x="701" y="242" width="3.5" height="26" fill="#c8facc"/><rect x="678" y="287" width="8" height="6" fill="#cdebb0"/><path d="M556 276L600 276L604 292H556z" fill="#e8e4df"/><path d="M596 280H620L630 292H600z" fill="#ebe8e3"/><path d="M640 262L668 262L690 292H630z" fill="#e2dad3"/><path d="M660 250L692 250L694 286L676 290z" fill="#ddd4cc"/><path d="M560 236V292" stroke="#fff" fill="none" stroke-width="1.3"/><path d="M566 236V276" stroke="#fff" fill="none" stroke-width="1.0"/><path d="M556 258H584" stroke="#fff" fill="none" stroke-width="1.2"/><path d="M584 236V292" stroke="#fff" fill="none" stroke-width="1.2"/><path d="M594 236V276" stroke="#fff" fill="none" stroke-width="1.3"/><path d="M556 276H600" stroke="#fff" fill="none" stroke-width="1.0"/><path d="M600 236L602 262" stroke="#fff" fill="none" stroke-width="1.2"/><path d="M611 236V250" stroke="#fff" fill="none" stroke-width="1.0"/><path d="M618 236L620 292" stroke="#fff" fill="none" stroke-width="1.3"/><path d="M586 252H640" stroke="#fff" fill="none" stroke-width="1.3"/><path d="M586 262H618" stroke="#fff" fill="none" stroke-width="1.0"/><path d="M628 236V252" stroke="#fff" fill="none" stroke-width="1.1"/><path d="M636 236V262" stroke="#fff" fill="none" stroke-width="1.2"/><path d="M644 236L646 262" stroke="#fff" fill="none" stroke-width="1.1"/><path d="M620 262H650L662 254" stroke="#fff" fill="none" stroke-width="1.2"/><path d="M652 236V254" stroke="#fff" fill="none" stroke-width="1.1"/><path d="M620 274L648 268L664 260" stroke="#fff" fill="none" stroke-width="1.2"/><path d="M560 246H566" stroke="#fff" fill="none" stroke-width="1.0"/><path d="M594 274H618" stroke="#fff" fill="none" stroke-width="1.0"/><path d="M602 284L620 280" stroke="#fff" fill="none" stroke-width="1.0"/><path d="M660 236L664 254" stroke="#fff" fill="none" stroke-width="1.2"/><path d="M668 236L672 250" stroke="#fff" fill="none" stroke-width="1.2"/><path d="M700 236L706 292" stroke="#fff" fill="none" stroke-width="1.3"/><path d="M710 232L716 292" stroke="#fff" fill="none" stroke-width="1.3"/><path d="M720 230L728 270" stroke="#fff" fill="none" stroke-width="1.2"/><path d="M694 248H740" stroke="#fff" fill="none" stroke-width="1.2"/><path d="M694 262L740 256" stroke="#fff" fill="none" stroke-width="1.2"/><path d="M694 276L736 268" stroke="#fff" fill="none" stroke-width="1.2"/><path d="M730 228L738 262" stroke="#fff" fill="none" stroke-width="1.2"/><path d="M740 226L744 250" stroke="#fff" fill="none" stroke-width="1.2"/><path d="M706 288L740 262L768 240" stroke="#fff" fill="none" stroke-width="1.4"/><path d="M716 292L768 252" stroke="#fff" fill="none" stroke-width="1.3"/><path d="M728 232L768 226" stroke="#fff" fill="none" stroke-width="1.2"/><path d="M736 244L760 234" stroke="#fff" fill="none" stroke-width="1.2"/><path d="M672 264L690 280" stroke="#fff" fill="none" stroke-width="1.2"/><path d="M664 270L680 292" stroke="#fff" fill="none" stroke-width="1.2"/><path d="M676 252L690 262" stroke="#fff" fill="none" stroke-width="1.2"/><path d="M556 236.600H640" stroke="#fff" fill="none" stroke-width="1.4"/><path d="M572 236V262" stroke="#fff" fill="none" stroke-width="1.0"/><path d="M578 262V292" stroke="#fff" fill="none" stroke-width="1.0"/><path d="M556 268H567" stroke="#fff" fill="none" stroke-width="1.0"/><path d="M600 262L602 292" stroke="#fff" fill="none" stroke-width="1.1"/><path d="M606 250V262" stroke="#fff" fill="none" stroke-width="1.0"/><path d="M622 244H652" stroke="#fff" fill="none" stroke-width="1.0"/><path d="M628 262L630 274" stroke="#fff" fill="none" stroke-width="1.0"/><path d="M640 262L642 272" stroke="#fff" fill="none" stroke-width="1.0"/><path d="M646 236V246" stroke="#fff" fill="none" stroke-width="1.0"/><path d="M698 236H740" stroke="#fff" fill="none" stroke-width="1.1"/><path d="M712 256L740 246" stroke="#fff" fill="none" stroke-width="1.1"/><path d="M722 276L750 252" stroke="#fff" fill="none" stroke-width="1.1"/><path d="M696 286L720 280" stroke="#fff" fill="none" stroke-width="1.1"/><path d="M744 226L752 244" stroke="#fff" fill="none" stroke-width="1.1"/><path d="M756 222L766 238" stroke="#fff" fill="none" stroke-width="1.1"/><path d="M556 283L604 279L614 270L628 270L630 292" stroke="#d9a0d9" stroke-width=".7" stroke-dasharray="1 1" fill="none"/><path d="M702 236L706 262L712 292" stroke="#d9a0d9" stroke-width=".7" stroke-dasharray="1 1" fill="none"/><path d="M672 266L680 272M716 268L724 262" stroke="#aac0e0" stroke-width="1" fill="none"/><path d="M766 224C757 231 752 238 750 248" stroke="#c9cc8a" stroke-width="4.200" fill="none"/><path d="M766 224C757 231 752 238 750 248" stroke="#f4f6b8" stroke-width="3.400" fill="none"/><rect x="738.500" y="261.500" width="23" height="23" rx="6" fill="#c8facc" stroke="#c9cc8a" stroke-width="4" transform="rotate(45 750 273)"/><rect x="738.500" y="261.500" width="23" height="23" rx="6" fill="#c8facc" stroke="#f4f6b8" stroke-width="3.200" transform="rotate(45 750 273)"/><path d="M746 250L748 256" stroke="#f4f6b8" stroke-width="3.200"/><rect x="747.500" y="270" width="3" height="4" fill="#a7d9c4" transform="rotate(-30 749 272)"/><path d="M758 236L768 232V246L762 248z" fill="#f0c8c8"/><path d="M554 81.500L600 76L622 72.800L640 70.200L662 66.500" stroke="#c9a067" stroke-width="6" fill="none"/><path d="M554 81.500L600 76L622 72.800L640 70.200L662 66.500" stroke="#f9cb8f" stroke-width="5" fill="none"/><path d="M556 92L562 91" stroke="#8c9ce0" stroke-width="2" fill="none"/><path d="M670 65L684 73L696 76.500L706 79M706.500 66L709.700 78L713 84.800L718 96.500L723 106.600L729 113.500L735.800 122.700L742.600 135L748 143L754.400 151.500L759 162L763 172L765 180" stroke="#d98a78" stroke-width="7.600" fill="none" stroke-linejoin="round"/><path d="M670 65L684 73L696 76.500L706 79M706.500 66L709.700 78L713 84.800L718 96.500L723 106.600L729 113.500L735.800 122.700L742.600 135L748 143L754.400 151.500L759 162L763 172L765 180" stroke="#f4a893" stroke-width="6.600" fill="none" stroke-linejoin="round"/><path d="M709.500 70L712 78L716 87L722 100L726 107" stroke="#e9e2dc" stroke-width="1.100" fill="none"/><path d="M694 78l8 2 2 10-6-4z" fill="#d3d0e0"/><path d="M554 232.500H640L682 234.500" stroke="#c9a067" stroke-width="5" fill="none"/><path d="M554 232.500H640L682 234.500" stroke="#f9cb8f" stroke-width="4" fill="none"/><path d="M690 238L692 262L695 284" stroke="#c9a067" stroke-width="3.600" fill="none"/><path d="M690 238L692 262L695 284" stroke="#f9cb8f" stroke-width="2.800" fill="none"/><path d="M770 216L761.600 216.500L735.400 219.700L710.600 223.800L694 229.700L683 236.600L672 249L660.900 260L647 273.800L633.300 289L628 295" stroke="#d98a78" stroke-width="6.400" fill="none" stroke-linejoin="round"/><path d="M770 216L761.600 216.500L735.400 219.700L710.600 223.800L694 229.700L683 236.600L672 249L660.900 260L647 273.800L633.300 289L628 295" stroke="#f4a893" stroke-width="5.400" fill="none" stroke-linejoin="round"/><path d="M744 214.500L770 212v10.500L744 222z" fill="#f4a893"/><path d="M765 176L765.800 201" stroke="#f4a893" stroke-width="6.500" fill="none"/><path d="M640 288l10-6 6 4-8 8z" fill="#f4f6b8"/><text x="587.50" y="80.60" font-size="4.50" fill="#5a4a30" text-anchor="start" textLength="28.50" lengthAdjust="spacingAndGlyphs" transform="rotate(-12.5 587.50 80.60)">Hyde Park Place</text><text x="572.50" y="82.40" font-size="3.80" fill="#5a4a30" text-anchor="start" opacity="0.6" transform="rotate(-8.0 572.50 82.40)">Nutford</text><rect x="622.50" y="69.20" width="11.00" height="4.80" rx=".8" fill="#fbe6c7" stroke="#c9a067" stroke-width=".5"/><text x="628.00" y="72.70" font-size="3.90" fill="#7a5a20" text-anchor="middle" textLength="8.60" lengthAdjust="spacingAndGlyphs">A402</text><text x="618.50" y="82.20" font-size="3.60" fill="#555" text-anchor="start" textLength="31.00" lengthAdjust="spacingAndGlyphs" stroke="#fff" stroke-width=".7" stroke-opacity=".65" paint-order="stroke" transform="rotate(-9.5 618.50 82.20)">North Carriage Drive</text><text x="581.00" y="101.00" font-size="3.60" fill="#666" text-anchor="start" textLength="30.00" lengthAdjust="spacingAndGlyphs" stroke="#fff" stroke-width=".7" stroke-opacity=".65" paint-order="stroke" opacity="0.85" transform="rotate(68.0 581.00 101.00)">West Carriage Drive</text><text x="712.50" y="84.50" font-size="4.40" fill="#7a3a2a" text-anchor="start" textLength="19.00" lengthAdjust="spacingAndGlyphs" transform="rotate(65.0 712.50 84.50)">Park Lane</text><text x="726.00" y="92.00" font-size="3.60" fill="#666" text-anchor="start" textLength="30.00" lengthAdjust="spacingAndGlyphs" stroke="#fff" stroke-width=".7" stroke-opacity=".65" paint-order="stroke" opacity="0.85" transform="rotate(-19.0 726.00 92.00)">Upper Brook Street</text><text x="724.00" y="103.00" font-size="3.60" fill="#666" text-anchor="start" textLength="22.00" lengthAdjust="spacingAndGlyphs" stroke="#fff" stroke-width=".7" stroke-opacity=".65" paint-order="stroke" opacity="0.85" transform="rotate(-19.0 724.00 103.00)">Culross Street</text><text x="735.00" y="72.00" font-size="3.60" fill="#666" text-anchor="start" textLength="16.00" lengthAdjust="spacingAndGlyphs" stroke="#fff" stroke-width=".7" stroke-opacity=".65" paint-order="stroke" opacity="0.8" transform="rotate(-19.0 735.00 72.00)">Lees Place</text><text x="734.00" y="76.00" font-size="3.60" fill="#666" text-anchor="start" textLength="18.00" lengthAdjust="spacingAndGlyphs" stroke="#fff" stroke-width=".7" stroke-opacity=".65" paint-order="stroke" opacity="0.8" transform="rotate(72.0 734.00 76.00)">Park Street</text><text x="752.00" y="118.00" font-size="3.60" fill="#666" text-anchor="start" textLength="20.00" lengthAdjust="spacingAndGlyphs" stroke="#fff" stroke-width=".7" stroke-opacity=".65" paint-order="stroke" opacity="0.8" transform="rotate(-20.0 752.00 118.00)">Mount Street</text><text x="738.50" y="129.50" font-size="4.40" fill="#7a3a2a" text-anchor="start" textLength="19.00" lengthAdjust="spacingAndGlyphs" transform="rotate(58.0 738.50 129.50)">Park Lane</text><text x="648.00" y="156.00" font-size="6.60" fill="#2f9a55" text-anchor="start" font-style="italic" textLength="27.00" lengthAdjust="spacingAndGlyphs" stroke="#fff" stroke-width=".7" stroke-opacity=".65" paint-order="stroke">Hyde Park</text><text x="573.00" y="166.80" font-size="4.20" fill="#555" text-anchor="middle" textLength="20.00" lengthAdjust="spacingAndGlyphs" stroke="#fff" stroke-width=".7" stroke-opacity=".65" paint-order="stroke">Serpentine</text><text x="573.00" y="171.60" font-size="4.20" fill="#555" text-anchor="middle" textLength="12.00" lengthAdjust="spacingAndGlyphs" stroke="#fff" stroke-width=".7" stroke-opacity=".65" paint-order="stroke">Bridge</text><text x="556.50" y="143.00" font-size="3.80" fill="#6d93c4" text-anchor="start" font-style="italic" opacity="0.8">Long</text><text x="556.50" y="148.00" font-size="3.80" fill="#6d93c4" text-anchor="start" font-style="italic" opacity="0.8">ter</text><text x="642.70" y="186.80" font-size="4.80" fill="#6d93c4" text-anchor="start" font-style="italic" textLength="29.70" lengthAdjust="spacingAndGlyphs">The Serpentine</text><text x="666.00" y="173.20" font-size="3.60" fill="#666" text-anchor="start" textLength="26.00" lengthAdjust="spacingAndGlyphs" stroke="#fff" stroke-width=".7" stroke-opacity=".65" paint-order="stroke" opacity="0.9" transform="rotate(17.0 666.00 173.20)">Serpentine Road</text><text x="612.50" y="215.30" font-size="4.20" fill="#5f8a66" text-anchor="middle" font-style="italic" textLength="21.50" lengthAdjust="spacingAndGlyphs">Old Football</text><text x="612.50" y="220.40" font-size="4.20" fill="#5f8a66" text-anchor="middle" font-style="italic" textLength="12.50" lengthAdjust="spacingAndGlyphs">Pitches</text><text x="563.50" y="229.30" font-size="3.60" fill="#666" text-anchor="start" textLength="30.00" lengthAdjust="spacingAndGlyphs" stroke="#fff" stroke-width=".7" stroke-opacity=".65" paint-order="stroke" opacity="0.9" transform="rotate(-1.0 563.50 229.30)">South Carriage Drive</text><text x="662.50" y="226.30" font-size="3.60" fill="#666" text-anchor="start" textLength="30.00" lengthAdjust="spacingAndGlyphs" stroke="#fff" stroke-width=".7" stroke-opacity=".65" paint-order="stroke" opacity="0.9" transform="rotate(-9.0 662.50 226.30)">South Carriage Drive</text><text x="556.00" y="232.70" font-size="3.80" fill="#5a4a30" text-anchor="start">dra</text><text x="607.00" y="249.00" font-size="6.60" fill="#7a7a7a" text-anchor="start" textLength="36.50" lengthAdjust="spacingAndGlyphs" stroke="#fff" stroke-width=".7" stroke-opacity=".65" paint-order="stroke">Knightsbridge</text><rect x="682.300" y="233.500" width="1.800" height="1.800" fill="#3f56c9"/><text x="667.00" y="241.20" font-size="5.00" fill="#3f56c9" text-anchor="start" font-weight="bold" textLength="31.00" lengthAdjust="spacingAndGlyphs" stroke="#fff" stroke-width=".7" stroke-opacity=".65" paint-order="stroke">Knightsbridge</text><rect x="742.300" y="218.700" width="1.800" height="1.800" fill="#3f56c9"/><text x="743.00" y="226.80" font-size="5.00" fill="#3f56c9" text-anchor="middle" font-weight="bold" textLength="22.00" lengthAdjust="spacingAndGlyphs" stroke="#fff" stroke-width=".7" stroke-opacity=".65" paint-order="stroke">Hyde Park</text><text x="743.00" y="232.00" font-size="5.00" fill="#3f56c9" text-anchor="middle" font-weight="bold" textLength="15.00" lengthAdjust="spacingAndGlyphs" stroke="#fff" stroke-width=".7" stroke-opacity=".65" paint-order="stroke">Corner</text><text x="750.00" y="219.60" font-size="4.40" fill="#6a2a1a" text-anchor="start" textLength="18.00" lengthAdjust="spacingAndGlyphs">Piccadilly</text><text x="659.50" y="263.50" font-size="4.20" fill="#7a3a2a" text-anchor="start" textLength="28.00" lengthAdjust="spacingAndGlyphs" transform="rotate(-50.0 659.50 263.50)">Brompton Road</text><rect x="648.00" y="267.20" width="8.30" height="5.40" rx=".8" fill="#fbd5cb" stroke="#d98a78" stroke-width=".5"/><text x="652.15" y="271.30" font-size="3.90" fill="#7a3a2a" text-anchor="middle" textLength="5.90" lengthAdjust="spacingAndGlyphs">A4</text><rect x="686.40" y="265.60" width="14.60" height="5.40" rx=".8" fill="#fbe6c7" stroke="#c9a067" stroke-width=".5"/><text x="693.70" y="269.70" font-size="3.90" fill="#7a5a20" text-anchor="middle" textLength="12.20" lengthAdjust="spacingAndGlyphs">A3216</text><rect x="741.90" y="257.10" width="12.10" height="5.20" rx=".8" fill="#f4f6c8" stroke="#b9bc7a" stroke-width=".5"/><text x="747.95" y="261.00" font-size="3.90" fill="#5a5a20" text-anchor="middle" textLength="9.70" lengthAdjust="spacingAndGlyphs">B310</text><text x="693.20" y="272.50" font-size="3.80" fill="#5a4a30" text-anchor="start" textLength="11.50" lengthAdjust="spacingAndGlyphs" transform="rotate(85.0 693.20 272.50)">Sloane</text><text x="556.00" y="263.30" font-size="3.60" fill="#666" text-anchor="start" textLength="24.00" lengthAdjust="spacingAndGlyphs" stroke="#fff" stroke-width=".7" stroke-opacity=".65" paint-order="stroke" opacity="0.85">Rutland Gardens</text><text x="609.50" y="270.00" font-size="3.60" fill="#666" text-anchor="start" textLength="24.00" lengthAdjust="spacingAndGlyphs" stroke="#fff" stroke-width=".7" stroke-opacity=".65" paint-order="stroke" opacity="0.85" transform="rotate(-88.0 609.50 270.00)">Montpelier Street</text><text x="621.00" y="285.00" font-size="3.60" fill="#666" text-anchor="start" textLength="17.00" lengthAdjust="spacingAndGlyphs" stroke="#fff" stroke-width=".7" stroke-opacity=".65" paint-order="stroke" opacity="0.85" transform="rotate(-30.0 621.00 285.00)">Cheval Place</text><text x="650.00" y="277.00" font-size="3.60" fill="#666" text-anchor="start" textLength="15.00" lengthAdjust="spacingAndGlyphs" stroke="#fff" stroke-width=".7" stroke-opacity=".65" paint-order="stroke" opacity="0.85" transform="rotate(42.0 650.00 277.00)">Hans Road</text><text x="676.00" y="258.00" font-size="3.60" fill="#666" text-anchor="start" textLength="17.00" lengthAdjust="spacingAndGlyphs" stroke="#fff" stroke-width=".7" stroke-opacity=".65" paint-order="stroke" opacity="0.85" transform="rotate(-58.0 676.00 258.00)">Basil Street</text><text x="704.00" y="262.00" font-size="3.60" fill="#666" text-anchor="start" textLength="20.00" lengthAdjust="spacingAndGlyphs" stroke="#fff" stroke-width=".7" stroke-opacity=".65" paint-order="stroke" opacity="0.8" transform="rotate(84.0 704.00 262.00)">Lowndes Street</text><text x="718.00" y="238.00" font-size="3.60" fill="#666" text-anchor="start" textLength="18.00" lengthAdjust="spacingAndGlyphs" stroke="#fff" stroke-width=".7" stroke-opacity=".65" paint-order="stroke" opacity="0.8" transform="rotate(80.0 718.00 238.00)">Wilton Place</text><text x="730.00" y="243.00" font-size="3.60" fill="#666" text-anchor="start" textLength="22.00" lengthAdjust="spacingAndGlyphs" stroke="#fff" stroke-width=".7" stroke-opacity=".65" paint-order="stroke" opacity="0.8" transform="rotate(24.0 730.00 243.00)">Wilton Crescent</text><text x="724.00" y="258.00" font-size="3.60" fill="#666" text-anchor="start" textLength="22.00" lengthAdjust="spacingAndGlyphs" stroke="#fff" stroke-width=".7" stroke-opacity=".65" paint-order="stroke" opacity="0.8" transform="rotate(-28.0 724.00 258.00)">Motcomb Street</text><text x="745.00" y="236.00" font-size="3.60" fill="#666" text-anchor="start" textLength="18.00" lengthAdjust="spacingAndGlyphs" stroke="#fff" stroke-width=".7" stroke-opacity=".65" paint-order="stroke" opacity="0.8" transform="rotate(-34.0 745.00 236.00)">Halkin Street</text><text x="662.00" y="289.00" font-size="3.60" fill="#666" text-anchor="start" stroke="#fff" stroke-width=".7" stroke-opacity=".65" paint-order="stroke" opacity="0.8" transform="rotate(20.0 662.00 289.00)">Hans</text><ellipse cx="723.60" cy="152.60" rx="5" ry="1.600" fill="rgba(0,0,0,.25)" transform="rotate(-30 723.60 152.60)"/><path d="M719.60 155.60C718.10 150.60 714.70 147.60 714.70 144.20A4.900 4.900 0 1 1 724.50 144.20C724.50 147.60 721.10 150.60 719.60 155.60z" fill="#2d83cb" stroke="#2069a8" stroke-width=".5"/><circle cx="719.60" cy="144.30" r="1.700" fill="#fff"/><ellipse cx="703.90" cy="182.20" rx="5" ry="1.600" fill="rgba(0,0,0,.25)" transform="rotate(-30 703.90 182.20)"/><path d="M699.90 185.20C698.40 180.20 695.00 177.20 695.00 173.80A4.900 4.900 0 1 1 704.80 173.80C704.80 177.20 701.40 180.20 699.90 185.20z" fill="#2d83cb" stroke="#2069a8" stroke-width=".5"/><circle cx="699.90" cy="173.90" r="1.700" fill="#fff"/><ellipse cx="713.00" cy="167.00" rx="5" ry="1.600" fill="rgba(0,0,0,.25)" transform="rotate(-30 713.00 167.00)"/><path d="M709.00 170.00C707.50 165.00 704.10 162.00 704.10 158.60A4.900 4.900 0 1 1 713.90 158.60C713.90 162.00 710.50 165.00 709.00 170.00z" fill="#2d83cb" stroke="#2069a8" stroke-width=".5"/><circle cx="709.00" cy="158.70" r="1.700" fill="#fff"/></svg>
<svg class="r" style="left:560px;top:73px;" width="13" height="27"><rect x="0.60" y="0.80" width="12.00" height="25.40" rx="1.60" fill="#fff" stroke="#b9b9b4" stroke-width="0.80"/></svg>
<svg class="r" style="left:561px;top:86px;" width="12" height="1"><rect x="0.00" y="0.30" width="11.20" height="0.50" fill="#ccc"/></svg>
<span class="t" style="left:564.38px;top:77px;font-size:7.60px;line-height:9px;color:#000;font-weight:bold;transform:scaleX(0.9995);">+</span>
<span class="t" style="left:564.38px;top:89px;font-size:7.60px;line-height:9px;color:#000;font-weight:bold;transform:scaleX(0.9995);">−</span>
<svg class="r" style="left:674px;top:107px;filter:drop-shadow(0 1.200px 5.600px rgba(0,0,0,.4));" width="71" height="53"><rect x="8.50" y="8.00" width="54.00" height="36.40" rx="4.80" fill="#fff"/></svg>
<svg class="r" style="left:704px;top:151px;" width="10" height="6"><g transform="translate(0.60 0.20) scale(1.0000 1.0000) translate(-0.00 -0.00)"><path d="M0 0h9L4.500 4.800z" fill="#fff"/></g></svg>
<span class="t" style="left:690.80px;top:122px;font-size:4.80px;line-height:5px;color:#444;font-weight:bold;transform:scaleX(0.9857);">S2-Radio-B</span>
<span class="t" style="left:690.80px;top:128px;font-size:4.80px;line-height:5px;color:#444;transform:scaleX(0.9875);">Latitude: 51,506</span>
<span class="t" style="left:690.80px;top:134px;font-size:4.80px;line-height:5px;color:#444;transform:scaleX(1.0036);">Longitude: -0,158</span>
<span class="t" style="left:690.80px;top:140px;font-size:4.80px;line-height:5px;color:#444;transform:scaleX(0.9933);">Time: 19:27</span>
<span class="t" style="left:728.81px;top:116px;font-size:6.80px;line-height:7px;color:#a9a9a9;transform:scaleX(0.9995);">×</span>
<svg class="r" style="left:687px;top:286px;" width="80" height="6"><rect x="0.60" y="0.00" width="79.40" height="6.00" fill="rgba(255,255,255,.75)"/></svg>
<span class="t" style="left:689.00px;top:286px;font-size:4.40px;line-height:5px;color:#0078a8;transform:scaleX(0.9689);">Leaflet</span>
<span class="t" style="left:703.30px;top:286px;font-size:4.40px;line-height:5px;color:#333;transform:scaleX(0.9995);">|</span>
<span class="t" style="left:706.20px;top:286px;font-size:4.40px;line-height:5px;color:#333;transform:scaleX(0.9995);">©</span>
<span class="t" style="left:710.00px;top:286px;font-size:4.40px;line-height:5px;color:#0078a8;transform:scaleX(0.9915);">OpenStreetMap</span>
<span class="t" style="left:743.00px;top:286px;font-size:4.40px;line-height:5px;color:#333;transform:scaleX(0.9831);">contributors</span>
</section>
<section>
<svg class="r" style="left:0px;top:292px;" width="768" height="1"><rect x="0.00" y="0.00" width="768.00" height="0.90" fill="#3a3c46"/></svg>
<svg class="r" style="left:0px;top:294px;" width="768" height="2"><rect x="0.00" y="0.30" width="768.00" height="0.80" fill="#3a3c46"/></svg>
<svg class="r" style="left:0px;top:307px;" width="768" height="1"><rect x="0.00" y="0.00" width="768.00" height="0.80" fill="#3a3c46"/></svg>
<svg class="r" style="left:458px;top:294px;" width="2" height="111"><rect x="0.40" y="0.30" width="0.80" height="110.00" fill="#3a3c46"/></svg>
<svg class="r" style="left:460px;top:294px;" width="2" height="111"><rect x="0.50" y="0.30" width="0.80" height="110.00" fill="#3a3c46"/></svg>
<svg class="r" style="left:592px;top:294px;" width="1" height="111"><rect x="0.20" y="0.30" width="0.80" height="110.00" fill="#3a3c46"/></svg>
<svg class="r" style="left:594px;top:294px;" width="2" height="111"><rect x="0.60" y="0.30" width="0.80" height="110.00" fill="#3a3c46"/></svg>
<svg class="r" style="left:459px;top:294px;" width="2" height="111"><rect x="0.20" y="0.30" width="1.30" height="110.00" fill="#474955"/></svg>
<svg class="r" style="left:593px;top:294px;" width="2" height="111"><rect x="0.00" y="0.30" width="1.60" height="110.00" fill="#474955"/></svg>
<span class="t" style="left:215.00px;top:298px;font-size:5.20px;line-height:6px;color:#8b8d97;transform:scaleX(1.1283);">Activity Log</span>
<span class="t" style="left:519.95px;top:298px;font-size:5.20px;line-height:6px;color:#8b8d97;transform:scaleX(1.0459);">Clock</span>
<span class="t" style="left:661.50px;top:298px;font-size:5.20px;line-height:6px;color:#8b8d97;transform:scaleX(1.1138);">Volume Control</span>
<svg class="r" style="left:2px;top:307px;" width="451" height="12"><rect x="0.00" y="0.80" width="450.80" height="11.00" fill="#4c4e5b"/></svg>
<svg class="r" style="left:2px;top:318px;" width="451" height="73"><rect x="0.00" y="0.70" width="450.80" height="72.30" fill="#5c5f6d"/></svg>
<span class="t" style="left:6.40px;top:310px;font-size:5.40px;line-height:6px;color:#f0f0f2;transform:scaleX(0.9800);">Resource</span>
<svg class="r" style="left:45px;top:311px;" width="6" height="4"><g transform="translate(0.90 0.40) scale(0.5000 0.5000) translate(-0.00 -0.00)"><path d="M0 0h9.200L4.600 6.600z" fill="#2a2b33"/></g></svg>
<span class="t" style="left:57.30px;top:310px;font-size:5.40px;line-height:6px;color:#f0f0f2;transform:scaleX(1.0079);">Start Time</span>
<svg class="r" style="left:100px;top:311px;" width="5" height="4"><g transform="translate(0.30 0.40) scale(0.5000 0.5000) translate(-0.00 -0.00)"><path d="M0 0h9.200L4.600 6.600z" fill="#2a2b33"/></g></svg>
<span class="t" style="left:111.70px;top:310px;font-size:5.40px;line-height:6px;color:#f0f0f2;transform:scaleX(0.9973);">End Time</span>
<svg class="r" style="left:152px;top:311px;" width="5" height="4"><g transform="translate(0.10 0.40) scale(0.5000 0.5000) translate(-0.00 -0.00)"><path d="M0 0h9.200L4.600 6.600z" fill="#2a2b33"/></g></svg>
<span class="t" style="left:163.50px;top:310px;font-size:5.40px;line-height:6px;color:#f0f0f2;transform:scaleX(1.0680);">Duration</span>
<span class="t" style="left:204.30px;top:310px;font-size:5.40px;line-height:6px;color:#f0f0f2;transform:scaleX(0.9955);">User Alias</span>
<svg class="r" style="left:245px;top:311px;" width="5" height="4"><g transform="translate(0.20 0.40) scale(0.5000 0.5000) translate(-0.00 -0.00)"><path d="M0 0h9.200L4.600 6.600z" fill="#2a2b33"/></g></svg>
<span class="t" style="left:256.60px;top:310px;font-size:5.40px;line-height:6px;color:#f0f0f2;transform:scaleX(1.0066);">Event</span>
<svg class="r" style="left:315px;top:311px;" width="5" height="4"><g transform="translate(0.00 0.40) scale(0.5000 0.5000) translate(-0.00 -0.00)"><path d="M0 0h9.200L4.600 6.600z" fill="#2a2b33"/></g></svg>
<span class="t" style="left:326.40px;top:310px;font-size:5.40px;line-height:6px;color:#f0f0f2;transform:scaleX(1.0436);">Info</span>
<span class="t" style="left:391.60px;top:310px;font-size:5.40px;line-height:6px;color:#f0f0f2;transform:scaleX(1.0054);">User ID</span>
<svg class="r" style="left:427px;top:311px;" width="5" height="4"><g transform="translate(0.20 0.40) scale(0.5000 0.5000) translate(-0.00 -0.00)"><path d="M0 0h9.200L4.600 6.600z" fill="#2a2b33"/></g></svg>
<div class="r" style="left:2px;top:318px;width:450.800px;height:73px;overflow:hidden">
<span class="t" style="left:6.60px;top:3px;font-size:5.40px;line-height:6px;color:#ececee;transform:scaleX(1.0158);">Police Dpt</span>
<span class="t" style="left:55.50px;top:3px;font-size:5.40px;line-height:6px;color:#ececee;transform:scaleX(1.0030);">7:36:46 PM</span>
<span class="t" style="left:109.25px;top:3px;font-size:5.40px;line-height:6px;color:#ececee;transform:scaleX(0.9957);">7:36:49 PM</span>
<span class="t" style="left:161.00px;top:3px;font-size:5.40px;line-height:6px;color:#ececee;transform:scaleX(0.9805);">00:02</span>
<span class="t" style="left:254.70px;top:3px;font-size:5.40px;line-height:6px;color:#ececee;transform:scaleX(1.0233);">Parallel console transmit</span>
<span class="t" style="left:6.60px;top:14px;font-size:5.40px;line-height:6px;color:#ececee;transform:scaleX(1.0158);">Police Dpt</span>
<span class="t" style="left:55.50px;top:14px;font-size:5.40px;line-height:6px;color:#ececee;transform:scaleX(1.0030);">7:36:40 PM</span>
<span class="t" style="left:109.25px;top:14px;font-size:5.40px;line-height:6px;color:#ececee;transform:scaleX(0.9957);">7:36:45 PM</span>
<span class="t" style="left:161.00px;top:14px;font-size:5.40px;line-height:6px;color:#ececee;transform:scaleX(0.9805);">00:06</span>
<span class="t" style="left:201.90px;top:14px;font-size:5.40px;line-height:6px;color:#ececee;transform:scaleX(1.0244);">S3-Radio-D</span>
<span class="t" style="left:254.70px;top:14px;font-size:5.40px;line-height:6px;color:#ececee;transform:scaleX(1.0503);">Incoming call</span>
<span class="t" style="left:389.40px;top:14px;font-size:5.40px;line-height:6px;color:#ececee;transform:scaleX(0.9894);">1800063</span>
<span class="t" style="left:6.60px;top:25px;font-size:5.40px;line-height:6px;color:#ececee;transform:scaleX(1.0158);">Police Dpt</span>
<span class="t" style="left:55.50px;top:25px;font-size:5.40px;line-height:6px;color:#ececee;transform:scaleX(1.0030);">7:36:16 PM</span>
<span class="t" style="left:109.25px;top:25px;font-size:5.40px;line-height:6px;color:#ececee;transform:scaleX(0.9957);">7:36:20 PM</span>
<span class="t" style="left:161.00px;top:25px;font-size:5.40px;line-height:6px;color:#ececee;transform:scaleX(0.9805);">00:03</span>
<span class="t" style="left:201.90px;top:25px;font-size:5.40px;line-height:6px;color:#ececee;transform:scaleX(1.0244);">S3-Radio-D</span>
<span class="t" style="left:254.70px;top:25px;font-size:5.40px;line-height:6px;color:#ececee;transform:scaleX(1.0503);">Incoming call</span>
<span class="t" style="left:389.40px;top:25px;font-size:5.40px;line-height:6px;color:#ececee;transform:scaleX(0.9894);">1800063</span>
<svg class="r" style="left:0px;top:34px;" width="451" height="35"><rect x="0.00" y="0.36" width="450.80" height="33.66" fill="#735555"/></svg>
<svg class="r" style="left:4px;top:36px;" width="7" height="7"><g transform="translate(0.25 0.76) scale(0.3300 0.3444) translate(-0.00 -0.00)"><path d="M10 .6L19.6 17.4H.4z" fill="#fff"/><path d="M9 6h2l-.3 6.2H9.3z" fill="rgba(0,0,0,.55)"/><rect x="9" y="13.3" width="2" height="2" fill="rgba(0,0,0,.55)"/></g></svg>
<span class="t" style="left:13.20px;top:37px;font-size:5.40px;line-height:6px;color:#ececee;transform:scaleX(1.0158);">Police Dpt</span>
<span class="t" style="left:55.50px;top:37px;font-size:5.40px;line-height:6px;color:#ececee;transform:scaleX(1.0030);">7:36:10 PM</span>
<span class="t" style="left:109.25px;top:37px;font-size:5.40px;line-height:6px;color:#ececee;transform:scaleX(0.9957);">7:36:10 PM</span>
<span class="t" style="left:201.90px;top:37px;font-size:5.40px;line-height:6px;color:#ececee;transform:scaleX(1.0244);">S3-Radio-D</span>
<span class="t" style="left:254.70px;top:37px;font-size:5.40px;line-height:6px;color:#ececee;transform:scaleX(1.0338);">Emergency confirmed</span>
<span class="t" style="left:389.40px;top:37px;font-size:5.40px;line-height:6px;color:#ececee;transform:scaleX(0.9894);">1800063</span>
<svg class="r" style="left:4px;top:47px;" width="7" height="8"><g transform="translate(0.25 0.98) scale(0.3300 0.3444) translate(-0.00 -0.00)"><path d="M10 .6L19.6 17.4H.4z" fill="#fff"/><path d="M9 6h2l-.3 6.2H9.3z" fill="rgba(0,0,0,.55)"/><rect x="9" y="13.3" width="2" height="2" fill="rgba(0,0,0,.55)"/></g></svg>
<span class="t" style="left:13.20px;top:48px;font-size:5.40px;line-height:6px;color:#ececee;transform:scaleX(1.0158);">Police Dpt</span>
<span class="t" style="left:55.50px;top:48px;font-size:5.40px;line-height:6px;color:#ececee;transform:scaleX(1.0030);">7:36:04 PM</span>
<span class="t" style="left:109.25px;top:48px;font-size:5.40px;line-height:6px;color:#ececee;transform:scaleX(0.9957);">7:36:04 PM</span>
<span class="t" style="left:201.90px;top:48px;font-size:5.40px;line-height:6px;color:#ececee;transform:scaleX(1.0244);">S3-Radio-D</span>
<span class="t" style="left:254.70px;top:48px;font-size:5.40px;line-height:6px;color:#ececee;transform:scaleX(1.0117);">Emergency received</span>
<span class="t" style="left:389.40px;top:48px;font-size:5.40px;line-height:6px;color:#ececee;transform:scaleX(0.9894);">1800063</span>
<span class="t" style="left:6.60px;top:59px;font-size:5.40px;line-height:6px;color:#ececee;transform:scaleX(1.0158);">Police Dpt</span>
<span class="t" style="left:55.50px;top:59px;font-size:5.40px;line-height:6px;color:#ececee;transform:scaleX(1.0030);">7:36:04 PM</span>
<span class="t" style="left:109.25px;top:59px;font-size:5.40px;line-height:6px;color:#ececee;transform:scaleX(0.9957);">7:36:08 PM</span>
<span class="t" style="left:161.00px;top:59px;font-size:5.40px;line-height:6px;color:#ececee;transform:scaleX(0.9805);">00:04</span>
<span class="t" style="left:201.90px;top:59px;font-size:5.40px;line-height:6px;color:#ececee;transform:scaleX(1.0244);">S3-Radio-D</span>
<span class="t" style="left:254.70px;top:59px;font-size:5.40px;line-height:6px;color:#ececee;transform:scaleX(0.9969);">Emergency call</span>
<span class="t" style="left:389.40px;top:59px;font-size:5.40px;line-height:6px;color:#ececee;transform:scaleX(0.9894);">1800063</span>
<span class="t" style="left:6.60px;top:70px;font-size:5.40px;line-height:6px;color:#ececee;transform:scaleX(1.0154);">Fire Dpt</span>
<span class="t" style="left:55.50px;top:70px;font-size:5.40px;line-height:6px;color:#ececee;transform:scaleX(1.0030);">7:31:55 PM</span>
<span class="t" style="left:109.25px;top:70px;font-size:5.40px;line-height:6px;color:#ececee;transform:scaleX(0.9957);">7:34:39 PM</span>
<span class="t" style="left:161.00px;top:70px;font-size:5.40px;line-height:6px;color:#ececee;transform:scaleX(0.9805);">02:44</span>
<span class="t" style="left:254.70px;top:70px;font-size:5.40px;line-height:6px;color:#ececee;transform:scaleX(1.0021);">General transmit</span>
</div>
<svg class="r" style="left:52px;top:307px;" width="1" height="84"><rect x="0.00" y="0.80" width="0.70" height="83.20" fill="rgba(40,42,52,.28)"/></svg>
<svg class="r" style="left:106px;top:307px;" width="2" height="84"><rect x="0.40" y="0.80" width="0.70" height="83.20" fill="rgba(40,42,52,.28)"/></svg>
<svg class="r" style="left:158px;top:307px;" width="1" height="84"><rect x="0.20" y="0.80" width="0.70" height="83.20" fill="rgba(40,42,52,.28)"/></svg>
<svg class="r" style="left:199px;top:307px;" width="1" height="84"><rect x="0.00" y="0.80" width="0.70" height="83.20" fill="rgba(40,42,52,.28)"/></svg>
<svg class="r" style="left:251px;top:307px;" width="1" height="84"><rect x="0.30" y="0.80" width="0.70" height="83.20" fill="rgba(40,42,52,.28)"/></svg>
<svg class="r" style="left:321px;top:307px;" width="1" height="84"><rect x="0.10" y="0.80" width="0.70" height="83.20" fill="rgba(40,42,52,.28)"/></svg>
<svg class="r" style="left:386px;top:307px;" width="1" height="84"><rect x="0.30" y="0.80" width="0.70" height="83.20" fill="rgba(40,42,52,.28)"/></svg>
<svg class="r" style="left:433px;top:307px;" width="1" height="84"><rect x="0.30" y="0.80" width="0.70" height="83.20" fill="rgba(40,42,52,.28)"/></svg>
<svg class="r" style="left:452px;top:307px;" width="7" height="84"><rect x="0.80" y="0.80" width="5.60" height="83.20" fill="#484a56"/></svg>
<svg class="r" style="left:454px;top:308px;" width="3" height="6"><rect x="0.20" y="0.00" width="2.00" height="5.40" fill="#7c7e8a"/></svg>
<span class="t" style="left:4.00px;top:394px;font-size:6.00px;line-height:6px;color:#f0f0f2;transform:scaleX(0.9778);">Activity Log</span>
<span class="t" style="left:41.00px;top:394px;font-size:6.00px;line-height:6px;color:#7d7f8a;transform:scaleX(0.9676);">Audio Archive</span>
<svg class="r" style="left:0px;top:402px;" width="38" height="2"><rect x="0.00" y="0.80" width="37.50" height="1.10" fill="#666875"/></svg>
<svg class="r" style="left:0px;top:404px;" width="768" height="1"><rect x="0.00" y="0.10" width="768.00" height="0.80" fill="#3a3c46"/></svg>
<span class="t" style="left:9.00px;top:407px;font-size:5.40px;line-height:6px;color:#666875;transform:scaleX(0.8279);">Clear Status</span>
<svg class="r" style="left:43px;top:404px;" width="1" height="13"><rect x="0.20" y="0.80" width="0.70" height="12.20" fill="#3a3c46"/></svg>
<svg class="r" style="left:250px;top:404px;" width="1" height="13"><rect x="0.00" y="0.80" width="0.70" height="12.20" fill="#3a3c46"/></svg>
<svg class="r" style="left:264px;top:404px;" width="1" height="13"><rect x="0.20" y="0.80" width="0.70" height="12.20" fill="#3a3c46"/></svg>
<svg class="r" style="left:254px;top:409px;" width="6" height="4"><g transform="translate(0.50 0.60) scale(0.5000 0.5000) translate(-0.00 -0.00)"><path d="M.6 5.800l4.800-5 4.800 5" fill="none" stroke="#5d5f6c" stroke-width="1.300"/></g></svg>
<svg class="r" style="left:754px;top:407px;" width="10" height="9"><g transform="translate(0.90 0.30) scale(0.5000 0.5000) translate(-0.00 -0.00)"><rect x=".8" y=".8" width="13.600" height="5.600" fill="none" stroke="#e8e8ea" stroke-width="1.600"/><rect x=".8" y="9.200" width="13.600" height="5.600" fill="none" stroke="#e8e8ea" stroke-width="1.600"/><circle cx="12.400" cy="4.600" r="5" fill="#3cc04c"/><path d="M10 4.600l1.800 1.800 3-3.400" fill="none" stroke="#e8ffe8" stroke-width="1.200"/></g></svg>
<svg class="r" style="left:767px;top:404px;" width="1" height="14"><rect x="0.00" y="0.10" width="0.80" height="13.00" fill="#3a3c46"/></svg>
<span class="t" style="left:492.00px;top:342px;font-size:14.40px;line-height:16px;color:#ececee;transform:scaleX(0.9437);">7:38:33 PM</span>
<span class="t" style="left:490.40px;top:363px;font-size:5.60px;line-height:6px;color:#ececee;transform:scaleX(1.1131);">Thursday, March 28, 2019</span>
<span class="t" style="left:645.90px;top:317px;font-size:5.40px;line-height:6px;color:#ececee;transform:scaleX(0.9594);">Select</span>
<svg class="r" style="left:665px;top:316px;" width="9" height="8"><g transform="translate(0.20 0.40) scale(0.4100 0.4111) translate(-0.00 -0.00)"><path d="M0 6h4l6-5.5v17L4 12H0z" fill="#fff"/><path d="M12.5 5.5a5 5 0 0 1 0 7M14.8 2.8a9 9 0 0 1 0 12.4" fill="none" stroke="#fff" stroke-width="2.300" stroke-linecap="round"/></g></svg>
<svg class="r" style="left:680px;top:319px;" width="28" height="2"><rect x="0.00" y="0.20" width="28.00" height="1.60" fill="#2d2e37"/></svg>
<svg class="r" style="left:708px;top:319px;" width="24" height="2"><rect x="0.00" y="0.20" width="23.60" height="1.60" fill="#8b8d97"/></svg>
<svg class="r" style="left:706px;top:316px;" width="5" height="8"><rect x="0.75" y="0.45" width="3.00" height="7.10" rx="0.00" fill="#2d2e37" stroke="#f0f0f2" stroke-width="0.90"/></svg>
<span class="t" style="left:639.20px;top:341px;font-size:5.40px;line-height:6px;color:#ececee;transform:scaleX(1.0043);">Unselect</span>
<svg class="r" style="left:665px;top:340px;" width="9" height="8"><g transform="translate(0.20 0.30) scale(0.4100 0.4111) translate(-0.00 -0.00)"><path d="M0 6h4l6-5.5v17L4 12H0z" fill="#fff"/><path d="M12.5 5.5a5 5 0 0 1 0 7M14.8 2.8a9 9 0 0 1 0 12.4" fill="none" stroke="#fff" stroke-width="2.300" stroke-linecap="round"/></g></svg>
<svg class="r" style="left:680px;top:343px;" width="28" height="2"><rect x="0.00" y="0.10" width="28.00" height="1.60" fill="#2d2e37"/></svg>
<svg class="r" style="left:708px;top:343px;" width="24" height="2"><rect x="0.00" y="0.10" width="23.60" height="1.60" fill="#8b8d97"/></svg>
<svg class="r" style="left:706px;top:339px;" width="5" height="9"><rect x="0.75" y="1.35" width="3.00" height="7.10" rx="0.00" fill="#2d2e37" stroke="#f0f0f2" stroke-width="0.90"/></svg>
<span class="t" style="left:630.80px;top:365px;font-size:5.40px;line-height:6px;color:#ececee;transform:scaleX(1.0455);">Microphone</span>
<svg class="r" style="left:665px;top:364px;" width="9" height="8"><g transform="translate(0.20 0.20) scale(0.4100 0.4111) translate(-0.00 -0.00)"><path d="M0 6h4l6-5.5v17L4 12H0z" fill="#fff"/><path d="M12.5 5.5a5 5 0 0 1 0 7M14.8 2.8a9 9 0 0 1 0 12.4" fill="none" stroke="#fff" stroke-width="2.300" stroke-linecap="round"/></g></svg>
<svg class="r" style="left:680px;top:367px;" width="28" height="2"><rect x="0.00" y="0.00" width="28.00" height="1.60" fill="#2d2e37"/></svg>
<svg class="r" style="left:708px;top:367px;" width="24" height="2"><rect x="0.00" y="0.00" width="23.60" height="1.60" fill="#8b8d97"/></svg>
<svg class="r" style="left:706px;top:363px;" width="5" height="9"><rect x="0.75" y="1.25" width="3.00" height="7.10" rx="0.00" fill="#2d2e37" stroke="#f0f0f2" stroke-width="0.90"/></svg>
<svg class="r" style="left:0px;top:416px;" width="768" height="1"><rect x="0.00" y="0.20" width="768.00" height="0.80" fill="#33343e"/></svg>
<svg class="r" style="left:275px;top:416px;" width="19" height="1"><rect x="0.00" y="0.00" width="18.80" height="1.00" fill="#5d5f6c"/></svg>
</section>
<aside>
<svg class="r" style="left:360px;top:32px;" width="30" height="21"><rect x="0.40" y="0.50" width="28.80" height="20.30" rx="1.20" fill="#b5262c"/></svg>
<svg class="r" style="left:361px;top:33px;" width="28" height="19"><rect x="0.40" y="0.50" width="26.80" height="18.30" fill="#2e2f39"/></svg>
<svg class="r" style="left:369px;top:36px;" width="12" height="10"><g transform="translate(0.80 0.10) scale(0.5250 0.5056) translate(-0.00 -0.00)"><path d="M10 .6L19.6 17.4H.4z" fill="#fff"/><path d="M9 6h2l-.3 6.2H9.3z" fill="#2e2f39"/><rect x="9" y="13.3" width="2" height="2" fill="#2e2f39"/></g></svg>
<span class="t" style="left:362.80px;top:48px;font-size:3.80px;line-height:4px;color:#fff;font-weight:bold;transform:scaleX(0.9840);">EMERGENCY</span>
<svg class="r" style="left:360px;top:54px;" width="110" height="44"><rect x="0.40" y="0.30" width="109.50" height="42.90" rx="2.00" fill="#b5262c"/></svg>
<svg class="r" style="left:361px;top:55px;" width="108" height="42"><rect x="0.50" y="0.40" width="107.30" height="40.70" rx="0.80" fill="#474955"/></svg>
<svg class="r" style="left:364px;top:57px;" width="84" height="7"><rect x="0.20" y="0.00" width="83.80" height="6.70" fill="#5c5f6d"/></svg>
<svg class="r" style="left:364px;top:63px;" width="84" height="2"><rect x="0.20" y="0.70" width="83.80" height="0.70" fill="#33343e"/></svg>
<span class="t" style="left:366.80px;top:57px;font-size:5.60px;line-height:6px;color:#fff;font-weight:bold;transform:scaleX(0.9933);">Police Dpt</span>
<svg class="r" style="left:451px;top:56px;" width="16" height="8"><rect x="0.00" y="0.60" width="16.00" height="7.20" fill="#e8534b"/></svg>
<svg class="r" style="left:456px;top:57px;" width="6" height="6"><g transform="translate(0.60 0.90) scale(0.4800 0.4600) translate(-0.00 -0.00)"><path d="M.7 .7l8.600 8.600M9.300 .7L.7 9.300" stroke="#fff" stroke-width="1.400"/></g></svg>
<svg class="r" style="left:361px;top:65px;" width="108" height="30"><rect x="0.60" y="0.90" width="107.10" height="28.20" fill="#735555"/></svg>
<svg class="r" style="left:361px;top:82px;" width="108" height="1"><rect x="0.60" y="0.30" width="107.10" height="0.60" fill="#5e4547"/></svg>
<svg class="r" style="left:366px;top:69px;" width="10" height="10"><g transform="translate(0.30 0.90) scale(0.4600 0.4889) translate(-0.00 -0.00)"><path d="M10 .6L19.6 17.4H.4z" fill="#fff"/><path d="M9 6h2l-.3 6.2H9.3z" fill="rgba(0,0,0,.55)"/><rect x="9" y="13.3" width="2" height="2" fill="rgba(0,0,0,.55)"/></g></svg>
<span class="t" style="left:377.80px;top:72px;font-size:5.60px;line-height:6px;color:#fff;font-weight:bold;transform:scaleX(0.9605);">Emergency</span>
<svg class="r" style="left:433px;top:69px;" width="14" height="10"><rect x="0.00" y="0.80" width="13.30" height="8.90" fill="#a95353"/></svg>
<svg class="r" style="left:436px;top:70px;" width="7" height="8"><g transform="translate(0.40 0.80) scale(0.4923 0.5000) translate(-0.00 -0.00)"><path d="M1.500 1l10 12M11.500 1L1.500 13" stroke="#ddb9b9" stroke-width="1.700"/><circle cx="5" cy="10" r="2.400" fill="#ddb9b9"/></g></svg>
<svg class="r" style="left:450px;top:69px;" width="14" height="10"><rect x="0.70" y="0.80" width="13.30" height="8.90" fill="#e8534b"/></svg>
<svg class="r" style="left:454px;top:71px;" width="6" height="6"><g transform="translate(0.90 0.80) scale(0.5000 0.5000) translate(-0.00 -0.00)"><path d="M.7 .7l8.600 8.600M9.300 .7L.7 9.300" stroke="#fff" stroke-width="1.500"/></g></svg>
<span class="t" style="left:366.00px;top:86px;font-size:5.60px;line-height:6px;color:#fff;font-weight:bold;transform:scaleX(0.9973);">S3-Radio-D</span>
<svg class="r" style="left:457px;top:86px;" width="7" height="5"><g transform="translate(0.80 0.60) scale(0.4839 0.4886) translate(-0.00 -0.00)"><path d="M.8 5l3.400 3L11.600 .8" fill="none" stroke="#e6dcdc" stroke-width="1.500"/></g></svg>
</aside>
</main>
</body></html>
